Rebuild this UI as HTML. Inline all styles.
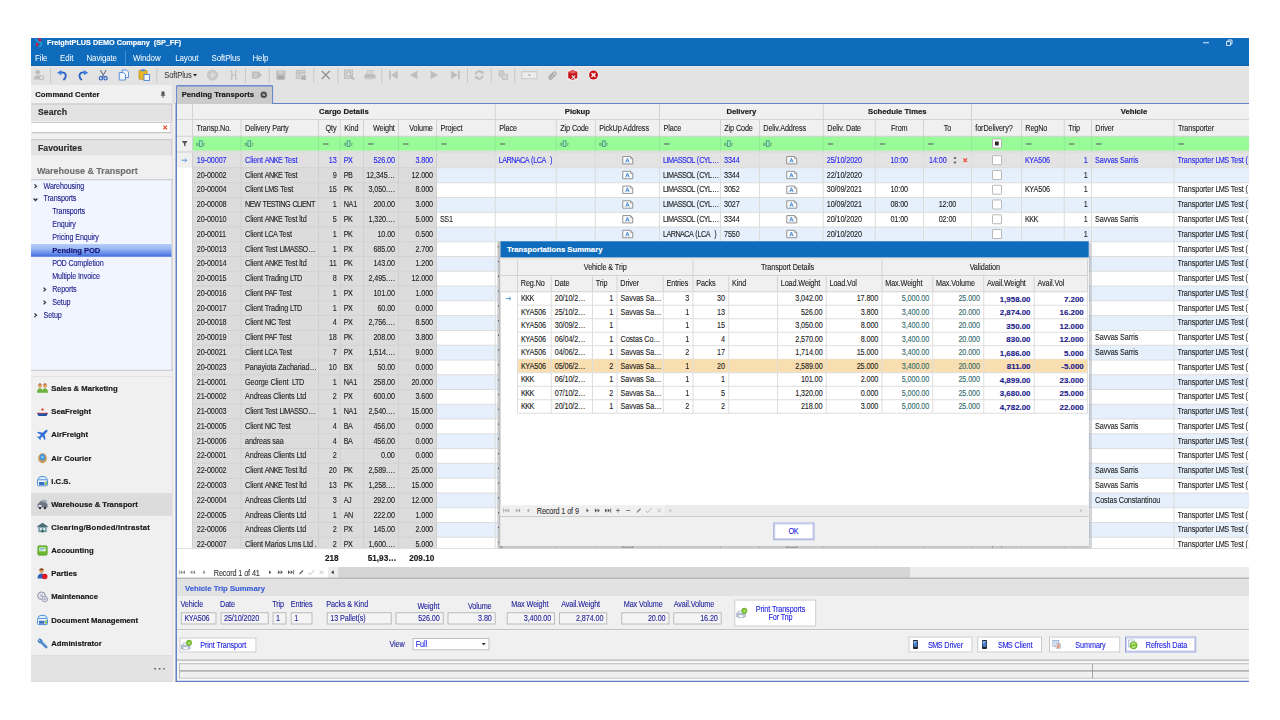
<!DOCTYPE html>
<html><head><meta charset="utf-8"><title>FreightPLUS DEMO Company (SP_FF)</title>
<style>html,body{margin:0;padding:0}
html{overflow:hidden;background:#fff}
body{width:1280px;height:720px;position:relative;overflow:hidden;background:#fff;font-family:"Liberation Sans",sans-serif;}
#root{left:0;top:0;width:5120px;height:2880px;transform:scale(0.25);transform-origin:0 0}

div,svg{position:absolute;box-sizing:border-box}
svg{overflow:visible}
.t,.tsel,.tn,.tl,.tr,.tt,.m,.b,.h,.h2,.bf,.bb,.bn,.tb{white-space:nowrap}
.t,.tsel,.tn,.tl,.tr,.tt{-webkit-text-stroke:0.4px currentColor}
.t{font-size:33px;color:#1c1c1c;letter-spacing:-0.52px}
.tsel{font-size:33px;color:#2424f0;letter-spacing:-0.52px}
.tn{font-size:33px;color:#1d1d9a;letter-spacing:-0.52px}
.tl{font-size:33px;color:#2222e0;letter-spacing:-0.52px}
.tr{font-size:32.6px;color:#1a1a8a;letter-spacing:-0.52px}
.tt{font-size:33px;color:#2f6a6a;letter-spacing:-0.52px}
.tb{font-size:30.4px;font-weight:bold;color:#12127a;letter-spacing:-0.2px;-webkit-text-stroke:0.48px #12127a}
.m{font-size:36px;letter-spacing:-0.48px}
.b{font-size:30.8px;font-weight:bold;color:#1a1a1a;-webkit-text-stroke:0.72px #1a1a1a}
.b.w,.ti.w{-webkit-text-stroke:0.6px #fff}
.ti{font-size:29px;font-weight:bold;white-space:nowrap}
i{font-style:normal;letter-spacing:-2.6px}
.bf{font-size:32.8px;font-weight:bold;color:#1a1a1a;-webkit-text-stroke:0.6px #1a1a1a}
.bn{font-size:31.6px;font-weight:bold;color:#1a1a8c;-webkit-text-stroke:0.48px #1a1a8c}
.bb{font-size:30.8px;font-weight:bold;color:#3a5fd8;-webkit-text-stroke:0.6px #3a5fd8}
.h{font-size:34.8px;font-weight:bold;color:#2a2a2a;-webkit-text-stroke:0.6px #2a2a2a}
.h2{font-size:35.8px;font-weight:bold;color:#6e6e6e;-webkit-text-stroke:0.6px #6e6e6e}
.w{color:#fff}
</style></head>
<body>
<div id="root">
<div style="left:124px;top:152px;width:4872px;height:2574px;background:#f0f0f0;"></div>
<div style="left:124px;top:152px;width:4872px;height:112px;background:#0f6cbd;"></div>
<svg style="left:137.2px;top:150.8px" width="36" height="40" viewBox="0 0 9 10"><path d="M1 1.200 3.800 4.600" stroke="#2aa3dc" stroke-width="1.200" fill="none"/><path d="M4 4.600c1.500-.6 3.200.2 3.200 1.600S6 8.600 4.800 8.800" stroke="#2aa3dc" stroke-width="1.200" fill="none"/><circle cx="5.700" cy="2.200" r="1.500" fill="#d0213a"/><circle cx="4.400" cy="1.200" r=".8" fill="#d0213a"/><path d="M2.200 5.200c1.200-.4 2.300.4 2 1.400s-1 1.300-.5 2.200c-1.300.2-2.300-.6-2-1.700z" fill="#d0213a"/></svg>
<div class="ti w" style="top:151.2px;height:40px;line-height:40px;left:188px;">FreightPLUS DEMO Company&nbsp; (SP_FF)</div>
<div style="left:4812px;top:169.2px;width:24px;height:3.6px;background:#e6eefa;"></div>
<svg style="left:4900px;top:154px" width="32" height="32" viewBox="0 0 8 8"><path d="M1.5 3h4v4h-4z M3 3V1.5h4v4H5.5" fill="none" stroke="#e6eefa" stroke-width="0.9"/></svg>
<div class="m w" style="top:210.8px;height:40px;line-height:40px;left:140px;transform:scaleX(0.88);transform-origin:0 50%;">File</div>
<div class="m w" style="top:210.8px;height:40px;line-height:40px;left:240px;transform:scaleX(0.88);transform-origin:0 50%;">Edit</div>
<div class="m w" style="top:210.8px;height:40px;line-height:40px;left:346px;transform:scaleX(0.88);transform-origin:0 50%;">Navigate</div>
<div class="m w" style="top:210.8px;height:40px;line-height:40px;left:532px;transform:scaleX(0.88);transform-origin:0 50%;">Window</div>
<div class="m w" style="top:210.8px;height:40px;line-height:40px;left:701.2px;transform:scaleX(0.88);transform-origin:0 50%;">Layout</div>
<div class="m w" style="top:210.8px;height:40px;line-height:40px;left:846.4px;transform:scaleX(0.88);transform-origin:0 50%;">SoftPlus</div>
<div class="m w" style="top:210.8px;height:40px;line-height:40px;left:1010px;transform:scaleX(0.88);transform-origin:0 50%;">Help</div>
<div style="left:500px;top:204px;width:3.2px;height:56px;background:#5b9ad6;"></div>
<div style="left:124px;top:264px;width:4872px;height:76px;background:#e3e3e3;"></div>
<div style="left:124px;top:260.8px;width:4872px;height:3.2px;background:#0b5fae;"></div>
<div style="left:124px;top:264px;width:4872px;height:2.8px;background:#f1ebe6;"></div>
<div style="left:690px;top:340px;width:4306px;height:76px;background:#e3e3e3;"></div>
<div style="left:200.4px;top:271.2px;width:3.6px;height:60px;background:#c8c8c8;"></div>
<div style="left:625.4px;top:271.2px;width:3.6px;height:60px;background:#c8c8c8;"></div>
<div style="left:980.4px;top:271.2px;width:3.6px;height:60px;background:#c8c8c8;"></div>
<div style="left:1075.4px;top:271.2px;width:3.6px;height:60px;background:#c8c8c8;"></div>
<div style="left:1253.4px;top:271.2px;width:3.6px;height:60px;background:#c8c8c8;"></div>
<div style="left:1350.4px;top:271.2px;width:3.6px;height:60px;background:#c8c8c8;"></div>
<div style="left:1525.4px;top:271.2px;width:3.6px;height:60px;background:#c8c8c8;"></div>
<div style="left:1868.4px;top:271.2px;width:3.6px;height:60px;background:#c8c8c8;"></div>
<div style="left:1963.4px;top:271.2px;width:3.6px;height:60px;background:#c8c8c8;"></div>
<div style="left:2057.2px;top:271.2px;width:3.6px;height:60px;background:#c8c8c8;"></div>
<svg style="left:131px;top:276.4px" width="48" height="48" viewBox="0 0 12 12"><circle cx="5" cy="3.3" r="2.3" fill="#bdbdbd"/><path d="M1 10.5c0-3 2-4.2 4-4.2s3 .8 3.5 1.5v2.7z" fill="#bdbdbd"/><circle cx="8.8" cy="8.6" r="2.1" fill="#e3e3e3" stroke="#bdbdbd" stroke-width="1.1"/></svg>
<svg style="left:224px;top:276.4px" width="48" height="48" viewBox="0 0 12 12"><path d="M4.600 3.500c3.200-.7 5.400 1 5.200 3.500-.1 1.600-1 2.900-2.400 3.900" fill="none" stroke="#2a62c4" stroke-width="1.900"/><path d="M1 3.800 5.400.9v5.400z" fill="#3f7fe0"/></svg>
<svg style="left:309px;top:276.4px" width="48" height="48" viewBox="0 0 12 12"><path d="M7.400 3.500C4.200 2.800 2 4.500 2.200 7c.1 1.600 1 2.900 2.400 3.900" fill="none" stroke="#2a62c4" stroke-width="1.900"/><path d="M11 3.800 6.600.9v5.400z" fill="#3f7fe0"/></svg>
<svg style="left:389px;top:276.4px" width="48" height="48" viewBox="0 0 12 12"><path d="M3 1l4.200 7M9 1 4.800 8" stroke="#6b7686" stroke-width="1.1" fill="none"/><circle cx="3.7" cy="9.300" r="1.700" fill="none" stroke="#2d62c8" stroke-width="1.100"/><circle cx="8.300" cy="9.300" r="1.700" fill="none" stroke="#2d62c8" stroke-width="1.100"/></svg>
<svg style="left:471px;top:276.4px" width="48" height="48" viewBox="0 0 12 12"><path d="M4.500 1h4.200l2 2v5.500H4.500z" fill="#f4f8ff" stroke="#4d86d6" stroke-width=".9"/><path d="M1.500 3.500h4.200l2 2V11H1.500z" fill="#f4f8ff" stroke="#4d86d6" stroke-width=".9"/></svg>
<svg style="left:552px;top:274.4px" width="52" height="52" viewBox="0 0 13 13"><rect x="1" y="1.800" width="8" height="9" rx=".8" fill="#e8b429" stroke="#b98612" stroke-width=".7"/><rect x="3" y=".8" width="4" height="2" rx=".6" fill="#5b8fd9"/><rect x="6" y="6" width="5.500" height="6" fill="#f4f8ff" stroke="#4d86d6" stroke-width=".9"/></svg>
<div class="m" style="top:281.2px;height:40px;line-height:40px;left:656.8px;color:#2a2a2a;font-size:34.4px;transform:scaleX(0.88);transform-origin:0 50%;">SoftPlus</div>
<svg style="left:772px;top:295.6px" width="16" height="12" viewBox="0 0 4 3"><path d="M0 0h4L2 2.600z" fill="#222"/></svg>
<svg style="left:826px;top:276.4px" width="48" height="48" viewBox="0 0 12 12"><circle cx="6" cy="6" r="5" fill="#c9c9c9" stroke="#bdbdbd" stroke-width=".8"/><circle cx="6" cy="6" r="2" fill="#e3e3e3"/><path d="M6 2.500v7M2.500 6h7" stroke="#dadada" stroke-width=".9"/></svg>
<svg style="left:915px;top:278.4px" width="40" height="44" viewBox="0 0 10 11"><path d="M1.500 1.500h1.600v8H1.500M8.500 1.500H6.900v8h1.600" fill="none" stroke="#bdbdbd" stroke-width="1.100"/><path d="M3.100 5.500h3.800" stroke="#bdbdbd" stroke-width="1"/></svg>
<svg style="left:1004px;top:280.4px" width="48" height="40" viewBox="0 0 12 10"><path d="M1 1.500h6.500L11 5 7.500 8.500H1z" fill="#bdbdbd"/><path d="M2.500 3.500h4M2.500 5h4M2.500 6.500h4" stroke="#e3e3e3" stroke-width=".6"/></svg>
<svg style="left:1101px;top:278.4px" width="44" height="44" viewBox="0 0 11 11"><rect x="1" y="1" width="9" height="9" rx=".6" fill="#bdbdbd"/><rect x="3" y="1" width="5" height="3.500" fill="#cfcfcf"/><rect x="2.500" y="6.300" width="6" height="3.700" fill="#a9a9a9"/></svg>
<svg style="left:1181px;top:278.4px" width="48" height="44" viewBox="0 0 12 11"><rect x="1" y="1" width="8.500" height="8" fill="#d2d2d2" stroke="#bdbdbd" stroke-width=".9"/><path d="M1 3.200h8.500M3.800 1v8" stroke="#bdbdbd" stroke-width=".8"/><path d="M6.500 6.500l4 4M10.500 6.500l-4 4" stroke="#a8a8a8" stroke-width="1.300"/></svg>
<svg style="left:1281px;top:278.4px" width="44" height="44" viewBox="0 0 11 11"><path d="M1.500 1.500l8 8M9.500 1.500l-8 8" stroke="#8d8d8d" stroke-width="1.100"/></svg>
<svg style="left:1374px;top:276.4px" width="48" height="48" viewBox="0 0 12 12"><rect x="1" y="1" width="8" height="8.500" fill="#d4d4d4" stroke="#bdbdbd" stroke-width=".9"/><circle cx="5" cy="5" r="2.300" fill="#dedede" stroke="#b3b3b3" stroke-width=".9"/><path d="M7 7l3.500 3.500" stroke="#b0b0b0" stroke-width="1.400"/></svg>
<svg style="left:1454px;top:278.4px" width="52" height="44" viewBox="0 0 13 11"><path d="M4 1h6l-1.500 4h-6z" fill="#d6d6d6" stroke="#bdbdbd" stroke-width=".6"/><path d="M1 6l1.500-1.500h8L12 6v3H1z" fill="#bdbdbd"/><rect x="2.500" y="8" width="7" height="2" fill="#cdcdcd"/></svg>
<svg style="left:1553px;top:280.4px" width="40" height="40" viewBox="0 0 10 10"><rect x=".8" y=".8" width="1.700" height="8.400" fill="#bdbdbd"/><path d="M9.400.8v8.400L2.800 5z" fill="#bdbdbd"/></svg>
<svg style="left:1636px;top:280.4px" width="36" height="40" viewBox="0 0 9 10"><path d="M8.300.8v8.400L1 5z" fill="#bdbdbd"/></svg>
<svg style="left:1720.4px;top:280.4px" width="36" height="40" viewBox="0 0 9 10"><path d="M.7.800v8.400L8 5z" fill="#bdbdbd"/></svg>
<svg style="left:1802px;top:280.4px" width="40" height="40" viewBox="0 0 10 10"><rect x="7.500" y=".8" width="1.700" height="8.400" fill="#bdbdbd"/><path d="M.6.800v8.400L7.200 5z" fill="#bdbdbd"/></svg>
<svg style="left:1895px;top:278.4px" width="44" height="44" viewBox="0 0 11 11"><path d="M2 5a3.600 3.600 0 0 1 6.500-1.800M9 6A3.600 3.600 0 0 1 2.500 7.800" fill="none" stroke="#bdbdbd" stroke-width="1.900"/><path d="M9.800 1v3.300H6.500zM1.200 10V6.700h3.300z" fill="#bdbdbd"/></svg>
<svg style="left:1990px;top:278.4px" width="44" height="44" viewBox="0 0 11 11"><rect x="1.500" y="1" width="5" height="6.500" rx="1.500" fill="#cdcdcd" stroke="#bdbdbd" stroke-width=".8"/><rect x="5" y="5" width="5" height="5" fill="#d6d6d6" stroke="#bdbdbd" stroke-width=".8"/></svg>
<div style="left:2085.2px;top:285.2px;width:65.2px;height:32px;background:#ededed;border:4px solid #c4c4c4;"></div>
<svg style="left:2112px;top:298px" width="12" height="8" viewBox="0 0 3 2"><path d="M0 0h3L1.500 1.800z" fill="#999"/></svg>
<svg style="left:2186px;top:280.4px" width="44" height="40" viewBox="0 0 11 10"><path d="M2 7.500 7 2.300a1.600 1.600 0 0 1 2.300 2.200L4.500 9.200a1 1 0 0 1-1.400-1.400L7.300 3.700" fill="none" stroke="#a9a9a9" stroke-width="1.300"/></svg>
<svg style="left:2267.2px;top:276.4px" width="48" height="48" viewBox="0 0 12 12"><rect x=".5" y=".5" width="11" height="11" rx="1.500" fill="#f6eaea"/><path d="M1.500 3 6 1l4.500 2v6L6 11 1.500 9z" fill="#c4121c"/><path d="M1.500 3 6 1l4.500 2L6 5z" fill="#e25a60"/><path d="M5 6.500l3.500 3.500M8.500 6.500 5 10" stroke="#d8d8d8" stroke-width="1.100"/></svg>
<svg style="left:2349.6px;top:276.4px" width="48" height="48" viewBox="0 0 12 12"><circle cx="6" cy="6" r="5.300" fill="#fff"/><circle cx="6" cy="6" r="4.500" fill="#c8101a"/><path d="M4 4l4 4M8 4 4 8" stroke="#fff" stroke-width="1.400"/></svg>
<div style="left:124px;top:340px;width:566px;height:2386px;background:#f0f0f0;"></div>
<div style="left:687.6px;top:340px;width:2.4px;height:2386px;background:#d6d6d6;"></div>
<div style="left:693.2px;top:416px;width:8.4px;height:2310px;background:#f3efe9;"></div>
<div class="b" style="top:358.4px;height:40px;line-height:40px;left:141.2px;">Command Center</div>
<svg style="left:640px;top:362.4px" width="24" height="32" viewBox="0 0 6 8"><path d="M1.500 1h3v3.200l1 1H.5l1-1z" fill="#555"/><path d="M3 5.200v2.300" stroke="#555" stroke-width=".8"/></svg>
<div style="left:124px;top:413.6px;width:563.6px;height:71.6px;background:#e3e3e3;border-top:4px solid #c4c4c4;border-right:4px solid #cfcfcf;"></div>
<div class="h" style="top:428.8px;height:40px;line-height:40px;left:152px;">Search</div>
<div style="left:126px;top:488px;width:559.2px;height:45.2px;background:#fff;border:4px solid #cdcdcd;border-bottom-color:#b4b4b4;border-left:none;"></div>
<svg style="left:651px;top:500.4px" width="20" height="20" viewBox="0 0 5 5"><path d="M.7.700l3.600 3.600M4.300.700.7 4.300" stroke="#e8401c" stroke-width="1.100"/></svg>
<div style="left:124px;top:557.2px;width:563.6px;height:65.2px;background:#e3e3e3;border-top:4px solid #c4c4c4;border-right:4px solid #cfcfcf;"></div>
<div class="h" style="top:572px;height:40px;line-height:40px;left:152px;">Favourites</div>
<div class="h2" style="top:663.6px;height:40px;line-height:40px;left:148px;">Warehouse &amp; Transport</div>
<div style="left:124px;top:717.2px;width:566.4px;height:766px;background:#f0f5ff;border:4px solid #c2c4c8;border-left:none;"></div>
<div class="tr" style="top:722.8px;height:40px;line-height:40px;left:173.6px;transform:scaleX(0.88);transform-origin:0 50%;">Warehousing</div>
<svg style="left:134px;top:735.2px" width="16" height="20" viewBox="0 0 4 5"><path d="M1 .6l2 1.900-2 1.900" fill="none" stroke="#3a3a3a" stroke-width="1.300"/></svg>
<div class="tr" style="top:774.4px;height:40px;line-height:40px;left:173.6px;transform:scaleX(0.88);transform-origin:0 50%;">Transports</div>
<svg style="left:132px;top:789.6px" width="20" height="16" viewBox="0 0 5 4"><path d="M.6 1l1.900 2 1.900-2" fill="none" stroke="#3a3a3a" stroke-width="1.300"/></svg>
<div class="tr" style="top:826px;height:40px;line-height:40px;left:209.2px;transform:scaleX(0.88);transform-origin:0 50%;">Transports</div>
<div class="tr" style="top:877.6px;height:40px;line-height:40px;left:209.2px;transform:scaleX(0.88);transform-origin:0 50%;">Enquiry</div>
<div class="tr" style="top:929.2px;height:40px;line-height:40px;left:209.2px;transform:scaleX(0.88);transform-origin:0 50%;">Pricing Enquiry</div>
<div style="left:124px;top:976px;width:562px;height:51.2px;background:linear-gradient(#b4ccf7,#9dbcf4 35%,#3f6bdc);"></div>
<div class="tb" style="top:980.8px;height:40px;line-height:40px;left:209.2px;">Pending POD</div>
<div class="tr" style="top:1032.4px;height:40px;line-height:40px;left:209.2px;transform:scaleX(0.88);transform-origin:0 50%;"><i>PO</i>D Completion</div>
<div class="tr" style="top:1084px;height:40px;line-height:40px;left:209.2px;transform:scaleX(0.88);transform-origin:0 50%;">Multiple Invoice</div>
<div class="tr" style="top:1135.6px;height:40px;line-height:40px;left:209.2px;transform:scaleX(0.88);transform-origin:0 50%;">Reports</div>
<svg style="left:170.4px;top:1148px" width="16" height="20" viewBox="0 0 4 5"><path d="M1 .6l2 1.900-2 1.900" fill="none" stroke="#3a3a3a" stroke-width="1.300"/></svg>
<div class="tr" style="top:1187.2px;height:40px;line-height:40px;left:209.2px;transform:scaleX(0.88);transform-origin:0 50%;">Setup</div>
<svg style="left:170.4px;top:1199.6px" width="16" height="20" viewBox="0 0 4 5"><path d="M1 .6l2 1.900-2 1.900" fill="none" stroke="#3a3a3a" stroke-width="1.300"/></svg>
<div class="tr" style="top:1238.8px;height:40px;line-height:40px;left:173.6px;transform:scaleX(0.88);transform-origin:0 50%;">Setup</div>
<svg style="left:134px;top:1251.2px" width="16" height="20" viewBox="0 0 4 5"><path d="M1 .6l2 1.900-2 1.900" fill="none" stroke="#3a3a3a" stroke-width="1.300"/></svg>
<div style="left:124px;top:1504.4px;width:563.6px;height:3.6px;background:#e3e3e3;"></div>
<svg style="left:146.4px;top:1531.4px" width="48" height="44" viewBox="0 0 12 11"><circle cx="3.500" cy="3" r="2" fill="#e0a060"/><circle cx="8.500" cy="3" r="2" fill="#e0a060"/><path d="M.5 10c0-3 1.500-4.500 3-4.500s3 1.500 3 4.500z" fill="#6bb33a"/><path d="M5.500 10c0-3 1.500-4.500 3-4.500s3 1.500 3 4.500z" fill="#6bb33a"/><path d="M2.200 1.800a1.600 1.600 0 0 1 2.600 0M7.200 1.800a1.600 1.600 0 0 1 2.600 0" stroke="#a0522d" stroke-width="1" fill="none"/></svg>
<div class="b" style="top:1533.8px;height:40px;line-height:40px;left:205.2px;">Sales &amp; Marketing</div>
<svg style="left:146.4px;top:1624px" width="48" height="44" viewBox="0 0 12 11"><path d="M.5 7h11l-1.500 3h-8z" fill="#1d4fa8"/><path d="M2.500 7l1-2.500h5l1 2.500z" fill="#f6f6f6" stroke="#c8c8c8" stroke-width=".4"/><path d="M5 4.500V2.500h2v2z" fill="#d23b2b"/><path d="M.5 7.200h11" stroke="#d23b2b" stroke-width=".7"/></svg>
<div class="b" style="top:1626.4px;height:40px;line-height:40px;left:205.2px;">SeaFreight</div>
<svg style="left:146.4px;top:1714.6px" width="48" height="48" viewBox="0 0 12 12"><path d="M10.800 1.200c.7.700-.3 2-1.300 3L8 5.700l1 4.800-1 .8-2-3.800-2 2 .2 1.500-.7.500-1-2-2-1 .5-.700 1.500.2 2-2L.7 4l.8-1 4.800 1 1.500-1.500c1-1 2.300-2 3-1.300z" fill="#2d6fd8"/></svg>
<div class="b" style="top:1719px;height:40px;line-height:40px;left:205.2px;">AirFreight</div>
<svg style="left:148.4px;top:1807.2px" width="44" height="48" viewBox="0 0 11 12"><ellipse cx="5.500" cy="6.500" rx="4.300" ry="5" fill="#c79a5a"/><ellipse cx="5.500" cy="5.500" rx="2.600" ry="3.300" fill="#3f8fe0"/><path d="M4 4.500c.8-1 2-1 2.700 0s0 2-.7 2.500-1.600-.2-2-1z" fill="#7cc1f2"/></svg>
<div class="b" style="top:1811.6px;height:40px;line-height:40px;left:205.2px;">Air Courier</div>
<svg style="left:146.4px;top:1899.8px" width="48" height="48" viewBox="0 0 12 12"><path d="M1.500 5a4.500 3.500 0 0 1 9 0" fill="#dff0ff" stroke="#3d86d8" stroke-width="1"/><rect x="1" y="4.800" width="10" height="6" rx="1" fill="#f4f9ff" stroke="#3d86d8" stroke-width=".9"/><rect x="2.500" y="7" width="5.500" height="3" fill="#3d6fc0"/><rect x="8.800" y="6.500" width="1.500" height="3.500" fill="#6fb53c"/></svg>
<div class="b" style="top:1904.2px;height:40px;line-height:40px;left:205.2px;">I.C.S.</div>
<div style="left:124px;top:1972px;width:563.6px;height:91.2px;background:#dcdcdc;"></div>
<svg style="left:146.4px;top:1994.4px" width="48" height="44" viewBox="0 0 12 11"><path d="M1 6l3-3.500 4 .5 3 2.500v3.500H1z" fill="#6d7782"/><path d="M4 2.500l4-1.500 3 2-3 1z" fill="#9aa7b4"/><rect x="2" y="6.500" width="3" height="2" fill="#dfe6ee"/><circle cx="3.500" cy="9.500" r="1.200" fill="#333"/><circle cx="8.500" cy="9.500" r="1.200" fill="#333"/></svg>
<div class="b" style="top:1996.8px;height:40px;line-height:40px;left:205.2px;">Warehouse &amp; Transport</div>
<svg style="left:146.4px;top:2085px" width="48" height="48" viewBox="0 0 12 12"><path d="M.8 5 6 1.500 11.200 5v1H.8z" fill="#4b6f78"/><rect x="1.800" y="6" width="8.400" height="5" fill="#6f9aa2"/><rect x="3.300" y="6.800" width="2" height="2.200" fill="#dfeef0"/><rect x="6.700" y="6.800" width="2" height="2.200" fill="#dfeef0"/><rect x="5" y="9" width="2" height="2" fill="#2f4a50"/></svg>
<div class="b" style="top:2089.4px;height:40px;line-height:40px;left:205.2px;letter-spacing:0.72px;">Clearing/Bonded/Intrastat</div>
<svg style="left:148.4px;top:2179.6px" width="44" height="44" viewBox="0 0 11 11"><rect x=".8" y=".8" width="9.400" height="9.400" rx="1.200" fill="#6ab82f" stroke="#4d9420" stroke-width=".6"/><rect x="2.300" y="2.300" width="6.400" height="4" fill="#e9f7dc"/><path d="M3 3.500h5M3 5h3.500" stroke="#5a9ad8" stroke-width=".7"/></svg>
<div class="b" style="top:2182px;height:40px;line-height:40px;left:205.2px;">Accounting</div>
<svg style="left:146.4px;top:2270.2px" width="48" height="48" viewBox="0 0 12 12"><circle cx="5" cy="3.300" r="2.300" fill="#e2a468"/><path d="M2.600 2.600a2.500 2.500 0 0 1 4.800-.3L5 3z" fill="#8b4a22"/><path d="M1 11c0-3.500 1.800-5 4-5s4 1.500 4 5z" fill="#2f5fb8"/><circle cx="8.300" cy="9" r="2.700" fill="#e01b24"/></svg>
<div class="b" style="top:2274.6px;height:40px;line-height:40px;left:205.2px;">Parties</div>
<svg style="left:146.4px;top:2362.8px" width="48" height="48" viewBox="0 0 12 12"><circle cx="5" cy="5" r="3.800" fill="#e6e6ee" stroke="#8d90a8" stroke-width="1"/><circle cx="5" cy="5" r="1.400" fill="#b8bbd0"/><circle cx="8.300" cy="8.300" r="2.800" fill="#dcdce6" stroke="#9a9cb4" stroke-width=".9"/><circle cx="8.300" cy="8.300" r="1" fill="#a4a6bc"/></svg>
<div class="b" style="top:2367.2px;height:40px;line-height:40px;left:205.2px;">Maintenance</div>
<svg style="left:146.4px;top:2455.4px" width="48" height="48" viewBox="0 0 12 12"><path d="M1.500 5a4.500 3.500 0 0 1 9 0" fill="#dff0ff" stroke="#3d86d8" stroke-width="1"/><rect x="1" y="4.800" width="10" height="6" rx="1" fill="#f4f9ff" stroke="#3d86d8" stroke-width=".9"/><rect x="2.500" y="7" width="5.500" height="3" fill="#3d6fc0"/><rect x="8.800" y="6.500" width="1.500" height="3.500" fill="#6fb53c"/></svg>
<div class="b" style="top:2459.8px;height:40px;line-height:40px;left:205.2px;">Document Management</div>
<svg style="left:146.4px;top:2548px" width="48" height="48" viewBox="0 0 12 12"><path d="M2 2.200a2.600 2.600 0 0 1 3.800 2.500l4.600 4.600a1 1 0 0 1-1.500 1.500L4.300 6.200A2.600 2.600 0 0 1 1.500 3l1.600 1.300 1-1z" fill="#4f8fdc" stroke="#2f62a8" stroke-width=".5"/></svg>
<div class="b" style="top:2552.4px;height:40px;line-height:40px;left:205.2px;">Administrator</div>
<div style="left:124px;top:2620.8px;width:563.6px;height:105.2px;background:#e3e3e3;border-top:4px solid #dadada;"></div>
<div style="left:617.4px;top:2671.6px;width:6.8px;height:6.8px;background:#555;border-radius:2px;"></div>
<div style="left:635px;top:2671.6px;width:6.8px;height:6.8px;background:#555;border-radius:2px;"></div>
<div style="left:652.6px;top:2671.6px;width:6.8px;height:6.8px;background:#555;border-radius:2px;"></div>
<div style="left:124px;top:2723.6px;width:566px;height:2.4px;background:#cfcfcf;"></div>
<div style="left:702px;top:340px;width:392px;height:76px;background:#cbcbcb;border:6px solid #6c8ace;border-bottom:none;border-radius:8px 8px 0 0;"></div>
<div class="b" style="top:358.4px;height:40px;line-height:40px;left:726.8px;">Pending Transports</div>
<svg style="left:1041.2px;top:364.8px" width="28" height="28" viewBox="0 0 7 7"><circle cx="3.500" cy="3.500" r="3.200" fill="#4a4a4a"/><path d="M2.300 2.300l2.400 2.400M4.700 2.300 2.300 4.700" stroke="#e8e8e8" stroke-width=".8"/></svg>
<div style="left:1092px;top:412px;width:3904px;height:4px;background:#6482ca;"></div>
<div style="left:701.6px;top:412px;width:6.8px;height:2315.6px;background:#6482ca;"></div>
<div style="left:708px;top:416px;width:3.6px;height:2306px;background:#fbf8f0;"></div>
<div style="left:704px;top:2722px;width:4292px;height:5.6px;background:#6482ca;"></div>
<div style="left:708px;top:416px;width:4288px;height:128.8px;background:#f0f0f0;"></div>
<div style="left:708px;top:544.8px;width:62px;height:58.4px;background:#f0f0f0;"></div>
<div style="left:770px;top:544.8px;width:4226px;height:58.4px;background:#98fb98;"></div>
<div style="left:708px;top:603.2px;width:4288px;height:9.2px;background:#dedede;"></div>
<div class="b" style="top:427.2px;height:40px;line-height:40px;left:775.6px;width:1200px;text-align:center;">Cargo Details</div>
<div style="left:768px;top:416px;width:4px;height:62.4px;background:#d3d3d3;"></div>
<div class="b" style="top:427.2px;height:40px;line-height:40px;left:1709.6px;width:1200px;text-align:center;">Pickup</div>
<div style="left:1979.2px;top:416px;width:4px;height:62.4px;background:#d3d3d3;"></div>
<div class="b" style="top:427.2px;height:40px;line-height:40px;left:2365.5px;width:1200px;text-align:center;">Delivery</div>
<div style="left:2636px;top:416px;width:4px;height:62.4px;background:#d3d3d3;"></div>
<div class="b" style="top:427.2px;height:40px;line-height:40px;left:2989.3px;width:1200px;text-align:center;">Schedule Times</div>
<div style="left:3291px;top:416px;width:4px;height:62.4px;background:#d3d3d3;"></div>
<div class="b" style="top:427.2px;height:40px;line-height:40px;left:3936px;width:1200px;text-align:center;">Vehicle</div>
<div style="left:3883.6px;top:416px;width:4px;height:62.4px;background:#d3d3d3;"></div>
<div style="left:708px;top:476.4px;width:4288px;height:4px;background:#d3d3d3;"></div>
<div style="left:708px;top:542.8px;width:4288px;height:4px;background:#d3d3d3;"></div>
<div style="left:768px;top:478.4px;width:4px;height:66.4px;background:#d3d3d3;"></div>
<div style="left:768px;top:544.8px;width:4px;height:58.4px;background:#d3d3d3;"></div>
<div class="t" style="top:491.2px;height:40px;line-height:40px;left:785.6px;transform:scaleX(0.88);transform-origin:0 50%;">Transp.No.</div>
<svg style="left:784.4px;top:561.2px" width="40" height="28" viewBox="0 0 10 7"><rect x="3.400" y=".6" width="2.800" height="5.600" fill="#a4f0b4" stroke="#3f9a84" stroke-width=".9"/><path d="M.5 3h1.500v2.200H.5zM2 3v2.200" stroke="#5f8f6f" stroke-width=".6" fill="none"/><path d="M9 3.200H7.600v1.900H9" stroke="#5f8f6f" stroke-width=".6" fill="none"/></svg>
<div style="left:962px;top:478.4px;width:4px;height:66.4px;background:#d3d3d3;"></div>
<div style="left:962px;top:544.8px;width:4px;height:58.4px;background:#8eea96;"></div>
<div class="t" style="top:491.2px;height:40px;line-height:40px;left:979.6px;transform:scaleX(0.88);transform-origin:0 50%;">Delivery Party</div>
<svg style="left:978.4px;top:561.2px" width="40" height="28" viewBox="0 0 10 7"><rect x="3.400" y=".6" width="2.800" height="5.600" fill="#a4f0b4" stroke="#3f9a84" stroke-width=".9"/><path d="M.5 3h1.500v2.200H.5zM2 3v2.200" stroke="#5f8f6f" stroke-width=".6" fill="none"/><path d="M9 3.200H7.600v1.900H9" stroke="#5f8f6f" stroke-width=".6" fill="none"/></svg>
<div style="left:1272px;top:478.4px;width:4px;height:66.4px;background:#d3d3d3;"></div>
<div style="left:1272px;top:544.8px;width:4px;height:58.4px;background:#8eea96;"></div>
<div class="t" style="top:491.2px;height:40px;line-height:40px;right:3774.2px;transform:scaleX(0.88);transform-origin:100% 50%;">Qty</div>
<div style="left:1292.4px;top:572.8px;width:21.6px;height:6px;background:#6f8f72;"></div>
<div style="left:1359px;top:478.4px;width:4px;height:66.4px;background:#d3d3d3;"></div>
<div style="left:1359px;top:544.8px;width:4px;height:58.4px;background:#8eea96;"></div>
<div class="t" style="top:491.2px;height:40px;line-height:40px;left:1376.6px;transform:scaleX(0.88);transform-origin:0 50%;">Kind</div>
<svg style="left:1375.4px;top:561.2px" width="40" height="28" viewBox="0 0 10 7"><rect x="3.400" y=".6" width="2.800" height="5.600" fill="#a4f0b4" stroke="#3f9a84" stroke-width=".9"/><path d="M.5 3h1.500v2.200H.5zM2 3v2.200" stroke="#5f8f6f" stroke-width=".6" fill="none"/><path d="M9 3.200H7.600v1.900H9" stroke="#5f8f6f" stroke-width=".6" fill="none"/></svg>
<div style="left:1452px;top:478.4px;width:4px;height:66.4px;background:#d3d3d3;"></div>
<div style="left:1452px;top:544.8px;width:4px;height:58.4px;background:#8eea96;"></div>
<div class="t" style="top:491.2px;height:40px;line-height:40px;right:3541.2px;transform:scaleX(0.88);transform-origin:100% 50%;">Weight</div>
<div style="left:1472.4px;top:572.8px;width:21.6px;height:6px;background:#6f8f72;"></div>
<div style="left:1592px;top:478.4px;width:4px;height:66.4px;background:#d3d3d3;"></div>
<div style="left:1592px;top:544.8px;width:4px;height:58.4px;background:#8eea96;"></div>
<div class="t" style="top:491.2px;height:40px;line-height:40px;right:3388.8px;transform:scaleX(0.88);transform-origin:100% 50%;">Volume</div>
<div style="left:1612.4px;top:572.8px;width:21.6px;height:6px;background:#6f8f72;"></div>
<div style="left:1744.4px;top:478.4px;width:4px;height:66.4px;background:#d3d3d3;"></div>
<div style="left:1744.4px;top:544.8px;width:4px;height:58.4px;background:#8eea96;"></div>
<div class="t" style="top:491.2px;height:40px;line-height:40px;left:1762px;transform:scaleX(0.88);transform-origin:0 50%;">Project</div>
<div style="left:1764.8px;top:572.8px;width:21.6px;height:6px;background:#6f8f72;"></div>
<div style="left:1979.2px;top:478.4px;width:4px;height:66.4px;background:#d3d3d3;"></div>
<div style="left:1979.2px;top:544.8px;width:4px;height:58.4px;background:#8eea96;"></div>
<div class="t" style="top:491.2px;height:40px;line-height:40px;left:1996.8px;transform:scaleX(0.88);transform-origin:0 50%;">Place</div>
<div style="left:1999.6px;top:572.8px;width:21.6px;height:6px;background:#6f8f72;"></div>
<div style="left:2223px;top:478.4px;width:4px;height:66.4px;background:#d3d3d3;"></div>
<div style="left:2223px;top:544.8px;width:4px;height:58.4px;background:#8eea96;"></div>
<div class="t" style="top:491.2px;height:40px;line-height:40px;left:2240.6px;transform:scaleX(0.88);transform-origin:0 50%;">Zip Code</div>
<svg style="left:2239.4px;top:561.2px" width="40" height="28" viewBox="0 0 10 7"><rect x="3.400" y=".6" width="2.800" height="5.600" fill="#a4f0b4" stroke="#3f9a84" stroke-width=".9"/><path d="M.5 3h1.500v2.200H.5zM2 3v2.200" stroke="#5f8f6f" stroke-width=".6" fill="none"/><path d="M9 3.200H7.600v1.900H9" stroke="#5f8f6f" stroke-width=".6" fill="none"/></svg>
<div style="left:2379.2px;top:478.4px;width:4px;height:66.4px;background:#d3d3d3;"></div>
<div style="left:2379.2px;top:544.8px;width:4px;height:58.4px;background:#8eea96;"></div>
<div class="t" style="top:491.2px;height:40px;line-height:40px;left:2396.8px;transform:scaleX(0.88);transform-origin:0 50%;">PickUp Address</div>
<svg style="left:2395.6px;top:561.2px" width="40" height="28" viewBox="0 0 10 7"><rect x="3.400" y=".6" width="2.800" height="5.600" fill="#a4f0b4" stroke="#3f9a84" stroke-width=".9"/><path d="M.5 3h1.500v2.200H.5zM2 3v2.200" stroke="#5f8f6f" stroke-width=".6" fill="none"/><path d="M9 3.200H7.600v1.900H9" stroke="#5f8f6f" stroke-width=".6" fill="none"/></svg>
<div style="left:2636px;top:478.4px;width:4px;height:66.4px;background:#d3d3d3;"></div>
<div style="left:2636px;top:544.8px;width:4px;height:58.4px;background:#8eea96;"></div>
<div class="t" style="top:491.2px;height:40px;line-height:40px;left:2653.6px;transform:scaleX(0.88);transform-origin:0 50%;">Place</div>
<div style="left:2656.4px;top:572.8px;width:21.6px;height:6px;background:#6f8f72;"></div>
<div style="left:2879.6px;top:478.4px;width:4px;height:66.4px;background:#d3d3d3;"></div>
<div style="left:2879.6px;top:544.8px;width:4px;height:58.4px;background:#8eea96;"></div>
<div class="t" style="top:491.2px;height:40px;line-height:40px;left:2897.2px;transform:scaleX(0.88);transform-origin:0 50%;">Zip Code</div>
<svg style="left:2896px;top:561.2px" width="40" height="28" viewBox="0 0 10 7"><rect x="3.400" y=".6" width="2.800" height="5.600" fill="#a4f0b4" stroke="#3f9a84" stroke-width=".9"/><path d="M.5 3h1.500v2.200H.5zM2 3v2.200" stroke="#5f8f6f" stroke-width=".6" fill="none"/><path d="M9 3.200H7.600v1.900H9" stroke="#5f8f6f" stroke-width=".6" fill="none"/></svg>
<div style="left:3035.6px;top:478.4px;width:4px;height:66.4px;background:#d3d3d3;"></div>
<div style="left:3035.6px;top:544.8px;width:4px;height:58.4px;background:#8eea96;"></div>
<div class="t" style="top:491.2px;height:40px;line-height:40px;left:3053.2px;transform:scaleX(0.88);transform-origin:0 50%;">Deliv.Address</div>
<svg style="left:3052px;top:561.2px" width="40" height="28" viewBox="0 0 10 7"><rect x="3.400" y=".6" width="2.800" height="5.600" fill="#a4f0b4" stroke="#3f9a84" stroke-width=".9"/><path d="M.5 3h1.500v2.200H.5zM2 3v2.200" stroke="#5f8f6f" stroke-width=".6" fill="none"/><path d="M9 3.200H7.600v1.900H9" stroke="#5f8f6f" stroke-width=".6" fill="none"/></svg>
<div style="left:3291px;top:478.4px;width:4px;height:66.4px;background:#d3d3d3;"></div>
<div style="left:3291px;top:544.8px;width:4px;height:58.4px;background:#8eea96;"></div>
<div class="t" style="top:491.2px;height:40px;line-height:40px;left:3308.6px;transform:scaleX(0.88);transform-origin:0 50%;">Deliv. Date</div>
<div style="left:3311.4px;top:572.8px;width:21.6px;height:6px;background:#6f8f72;"></div>
<div style="left:3498.8px;top:478.4px;width:4px;height:66.4px;background:#d3d3d3;"></div>
<div style="left:3498.8px;top:544.8px;width:4px;height:58.4px;background:#8eea96;"></div>
<div class="t" style="top:491.2px;height:40px;line-height:40px;left:2997.2px;width:1200px;text-align:center;transform:scaleX(0.88);transform-origin:50% 50%;">From</div>
<div style="left:3519.2px;top:572.8px;width:21.6px;height:6px;background:#6f8f72;"></div>
<div style="left:3691.6px;top:478.4px;width:4px;height:66.4px;background:#d3d3d3;"></div>
<div style="left:3691.6px;top:544.8px;width:4px;height:58.4px;background:#8eea96;"></div>
<div class="t" style="top:491.2px;height:40px;line-height:40px;left:3189.6px;width:1200px;text-align:center;transform:scaleX(0.88);transform-origin:50% 50%;">To</div>
<div style="left:3712px;top:572.8px;width:21.6px;height:6px;background:#6f8f72;"></div>
<div style="left:3883.6px;top:478.4px;width:4px;height:66.4px;background:#d3d3d3;"></div>
<div style="left:3883.6px;top:544.8px;width:4px;height:58.4px;background:#8eea96;"></div>
<div class="t" style="top:491.2px;height:40px;line-height:40px;left:3901.2px;transform:scaleX(0.88);transform-origin:0 50%;">forDelivery?</div>
<div style="left:3967.6px;top:554px;width:40px;height:40px;background:#fff;border:4px solid #b4b4b4;border-radius:4px;"></div>
<div style="left:3980px;top:566.4px;width:15.2px;height:15.2px;background:#2a2a2a;"></div>
<div style="left:4083.6px;top:478.4px;width:4px;height:66.4px;background:#d3d3d3;"></div>
<div style="left:4083.6px;top:544.8px;width:4px;height:58.4px;background:#8eea96;"></div>
<div class="t" style="top:491.2px;height:40px;line-height:40px;left:4101.2px;transform:scaleX(0.88);transform-origin:0 50%;">RegNo</div>
<div style="left:4104px;top:572.8px;width:21.6px;height:6px;background:#6f8f72;"></div>
<div style="left:4255.2px;top:478.4px;width:4px;height:66.4px;background:#d3d3d3;"></div>
<div style="left:4255.2px;top:544.8px;width:4px;height:58.4px;background:#8eea96;"></div>
<div class="t" style="top:491.2px;height:40px;line-height:40px;left:4272.8px;transform:scaleX(0.88);transform-origin:0 50%;">Trip</div>
<div style="left:4275.6px;top:572.8px;width:21.6px;height:6px;background:#6f8f72;"></div>
<div style="left:4363.6px;top:478.4px;width:4px;height:66.4px;background:#d3d3d3;"></div>
<div style="left:4363.6px;top:544.8px;width:4px;height:58.4px;background:#8eea96;"></div>
<div class="t" style="top:491.2px;height:40px;line-height:40px;left:4381.2px;transform:scaleX(0.88);transform-origin:0 50%;">Driver</div>
<div style="left:4384px;top:572.8px;width:21.6px;height:6px;background:#6f8f72;"></div>
<div style="left:4694px;top:478.4px;width:4px;height:66.4px;background:#d3d3d3;"></div>
<div style="left:4694px;top:544.8px;width:4px;height:58.4px;background:#8eea96;"></div>
<div class="t" style="top:491.2px;height:40px;line-height:40px;left:4711.6px;transform:scaleX(0.88);transform-origin:0 50%;">Transporter</div>
<div style="left:4714.4px;top:572.8px;width:21.6px;height:6px;background:#6f8f72;"></div>
<svg style="left:725.2px;top:560.8px" width="28" height="28" viewBox="0 0 7 7"><path d="M.5.800h6L4.200 3.500V6.300L2.800 5.500V3.500z" fill="#555"/></svg>
<div style="left:708px;top:612.4px;width:4288px;height:1580.8px;overflow:hidden;background:#fff;">
<div style="left:62px;top:0px;width:976.4px;height:61.1px;background:#e0e0e0;"></div>
<div style="left:1038.4px;top:0px;width:3249.6px;height:61.1px;background:#e3e3e3;"></div>
<div style="left:62px;top:59.1px;width:976.4px;height:61.1px;background:#dcdcdc;"></div>
<div style="left:1038.4px;top:59.1px;width:3249.6px;height:61.1px;background:#e5f0fc;"></div>
<div style="left:62px;top:118.2px;width:976.4px;height:61.1px;background:#dcdcdc;"></div>
<div style="left:1038.4px;top:118.2px;width:3249.6px;height:61.1px;background:#ffffff;"></div>
<div style="left:62px;top:177.3px;width:976.4px;height:61.1px;background:#dcdcdc;"></div>
<div style="left:1038.4px;top:177.3px;width:3249.6px;height:61.1px;background:#e5f0fc;"></div>
<div style="left:62px;top:236.4px;width:976.4px;height:61.1px;background:#dcdcdc;"></div>
<div style="left:1038.4px;top:236.4px;width:3249.6px;height:61.1px;background:#ffffff;"></div>
<div style="left:62px;top:295.5px;width:976.4px;height:61.1px;background:#dcdcdc;"></div>
<div style="left:1038.4px;top:295.5px;width:3249.6px;height:61.1px;background:#e5f0fc;"></div>
<div style="left:62px;top:354.6px;width:976.4px;height:61.1px;background:#dcdcdc;"></div>
<div style="left:1038.4px;top:354.6px;width:3249.6px;height:61.1px;background:#ffffff;"></div>
<div style="left:62px;top:413.7px;width:976.4px;height:61.1px;background:#dcdcdc;"></div>
<div style="left:1038.4px;top:413.7px;width:3249.6px;height:61.1px;background:#e5f0fc;"></div>
<div style="left:62px;top:472.8px;width:976.4px;height:61.1px;background:#dcdcdc;"></div>
<div style="left:1038.4px;top:472.8px;width:3249.6px;height:61.1px;background:#ffffff;"></div>
<div style="left:62px;top:531.9px;width:976.4px;height:61.1px;background:#dcdcdc;"></div>
<div style="left:1038.4px;top:531.9px;width:3249.6px;height:61.1px;background:#e5f0fc;"></div>
<div style="left:62px;top:591px;width:976.4px;height:61.1px;background:#dcdcdc;"></div>
<div style="left:1038.4px;top:591px;width:3249.6px;height:61.1px;background:#ffffff;"></div>
<div style="left:62px;top:650.1px;width:976.4px;height:61.1px;background:#dcdcdc;"></div>
<div style="left:1038.4px;top:650.1px;width:3249.6px;height:61.1px;background:#e5f0fc;"></div>
<div style="left:62px;top:709.2px;width:976.4px;height:61.1px;background:#dcdcdc;"></div>
<div style="left:1038.4px;top:709.2px;width:3249.6px;height:61.1px;background:#ffffff;"></div>
<div style="left:62px;top:768.3px;width:976.4px;height:61.1px;background:#dcdcdc;"></div>
<div style="left:1038.4px;top:768.3px;width:3249.6px;height:61.1px;background:#e5f0fc;"></div>
<div style="left:62px;top:827.4px;width:976.4px;height:61.1px;background:#dcdcdc;"></div>
<div style="left:1038.4px;top:827.4px;width:3249.6px;height:61.1px;background:#ffffff;"></div>
<div style="left:62px;top:886.5px;width:976.4px;height:61.1px;background:#dcdcdc;"></div>
<div style="left:1038.4px;top:886.5px;width:3249.6px;height:61.1px;background:#e5f0fc;"></div>
<div style="left:62px;top:945.6px;width:976.4px;height:61.1px;background:#dcdcdc;"></div>
<div style="left:1038.4px;top:945.6px;width:3249.6px;height:61.1px;background:#ffffff;"></div>
<div style="left:62px;top:1004.7px;width:976.4px;height:61.1px;background:#dcdcdc;"></div>
<div style="left:1038.4px;top:1004.7px;width:3249.6px;height:61.1px;background:#e5f0fc;"></div>
<div style="left:62px;top:1063.8px;width:976.4px;height:61.1px;background:#dcdcdc;"></div>
<div style="left:1038.4px;top:1063.8px;width:3249.6px;height:61.1px;background:#ffffff;"></div>
<div style="left:62px;top:1122.9px;width:976.4px;height:61.1px;background:#dcdcdc;"></div>
<div style="left:1038.4px;top:1122.9px;width:3249.6px;height:61.1px;background:#e5f0fc;"></div>
<div style="left:62px;top:1182px;width:976.4px;height:61.1px;background:#dcdcdc;"></div>
<div style="left:1038.4px;top:1182px;width:3249.6px;height:61.1px;background:#ffffff;"></div>
<div style="left:62px;top:1241.1px;width:976.4px;height:61.1px;background:#dcdcdc;"></div>
<div style="left:1038.4px;top:1241.1px;width:3249.6px;height:61.1px;background:#e5f0fc;"></div>
<div style="left:62px;top:1300.2px;width:976.4px;height:61.1px;background:#dcdcdc;"></div>
<div style="left:1038.4px;top:1300.2px;width:3249.6px;height:61.1px;background:#ffffff;"></div>
<div style="left:62px;top:1359.3px;width:976.4px;height:61.1px;background:#dcdcdc;"></div>
<div style="left:1038.4px;top:1359.3px;width:3249.6px;height:61.1px;background:#e5f0fc;"></div>
<div style="left:62px;top:1418.4px;width:976.4px;height:61.1px;background:#dcdcdc;"></div>
<div style="left:1038.4px;top:1418.4px;width:3249.6px;height:61.1px;background:#ffffff;"></div>
<div style="left:62px;top:1477.5px;width:976.4px;height:61.1px;background:#dcdcdc;"></div>
<div style="left:1038.4px;top:1477.5px;width:3249.6px;height:61.1px;background:#e5f0fc;"></div>
<div style="left:62px;top:1536.6px;width:976.4px;height:61.1px;background:#dcdcdc;"></div>
<div style="left:1038.4px;top:1536.6px;width:3249.6px;height:61.1px;background:#ffffff;"></div>
<div style="left:62px;top:57.1px;width:976.4px;height:4px;background:#d2d2d2;"></div>
<div style="left:1038.4px;top:57.1px;width:3249.6px;height:4px;background:#dddddd;"></div>
<div style="left:62px;top:116.2px;width:976.4px;height:4px;background:#d2d2d2;"></div>
<div style="left:1038.4px;top:116.2px;width:3249.6px;height:4px;background:#dddddd;"></div>
<div style="left:62px;top:175.3px;width:976.4px;height:4px;background:#d2d2d2;"></div>
<div style="left:1038.4px;top:175.3px;width:3249.6px;height:4px;background:#dddddd;"></div>
<div style="left:62px;top:234.4px;width:976.4px;height:4px;background:#d2d2d2;"></div>
<div style="left:1038.4px;top:234.4px;width:3249.6px;height:4px;background:#dddddd;"></div>
<div style="left:62px;top:293.5px;width:976.4px;height:4px;background:#d2d2d2;"></div>
<div style="left:1038.4px;top:293.5px;width:3249.6px;height:4px;background:#dddddd;"></div>
<div style="left:62px;top:352.6px;width:976.4px;height:4px;background:#d2d2d2;"></div>
<div style="left:1038.4px;top:352.6px;width:3249.6px;height:4px;background:#dddddd;"></div>
<div style="left:62px;top:411.7px;width:976.4px;height:4px;background:#d2d2d2;"></div>
<div style="left:1038.4px;top:411.7px;width:3249.6px;height:4px;background:#dddddd;"></div>
<div style="left:62px;top:470.8px;width:976.4px;height:4px;background:#d2d2d2;"></div>
<div style="left:1038.4px;top:470.8px;width:3249.6px;height:4px;background:#dddddd;"></div>
<div style="left:62px;top:529.9px;width:976.4px;height:4px;background:#d2d2d2;"></div>
<div style="left:1038.4px;top:529.9px;width:3249.6px;height:4px;background:#dddddd;"></div>
<div style="left:62px;top:589px;width:976.4px;height:4px;background:#d2d2d2;"></div>
<div style="left:1038.4px;top:589px;width:3249.6px;height:4px;background:#dddddd;"></div>
<div style="left:62px;top:648.1px;width:976.4px;height:4px;background:#d2d2d2;"></div>
<div style="left:1038.4px;top:648.1px;width:3249.6px;height:4px;background:#dddddd;"></div>
<div style="left:62px;top:707.2px;width:976.4px;height:4px;background:#d2d2d2;"></div>
<div style="left:1038.4px;top:707.2px;width:3249.6px;height:4px;background:#dddddd;"></div>
<div style="left:62px;top:766.3px;width:976.4px;height:4px;background:#d2d2d2;"></div>
<div style="left:1038.4px;top:766.3px;width:3249.6px;height:4px;background:#dddddd;"></div>
<div style="left:62px;top:825.4px;width:976.4px;height:4px;background:#d2d2d2;"></div>
<div style="left:1038.4px;top:825.4px;width:3249.6px;height:4px;background:#dddddd;"></div>
<div style="left:62px;top:884.5px;width:976.4px;height:4px;background:#d2d2d2;"></div>
<div style="left:1038.4px;top:884.5px;width:3249.6px;height:4px;background:#dddddd;"></div>
<div style="left:62px;top:943.6px;width:976.4px;height:4px;background:#d2d2d2;"></div>
<div style="left:1038.4px;top:943.6px;width:3249.6px;height:4px;background:#dddddd;"></div>
<div style="left:62px;top:1002.7px;width:976.4px;height:4px;background:#d2d2d2;"></div>
<div style="left:1038.4px;top:1002.7px;width:3249.6px;height:4px;background:#dddddd;"></div>
<div style="left:62px;top:1061.8px;width:976.4px;height:4px;background:#d2d2d2;"></div>
<div style="left:1038.4px;top:1061.8px;width:3249.6px;height:4px;background:#dddddd;"></div>
<div style="left:62px;top:1120.9px;width:976.4px;height:4px;background:#d2d2d2;"></div>
<div style="left:1038.4px;top:1120.9px;width:3249.6px;height:4px;background:#dddddd;"></div>
<div style="left:62px;top:1180px;width:976.4px;height:4px;background:#d2d2d2;"></div>
<div style="left:1038.4px;top:1180px;width:3249.6px;height:4px;background:#dddddd;"></div>
<div style="left:62px;top:1239.1px;width:976.4px;height:4px;background:#d2d2d2;"></div>
<div style="left:1038.4px;top:1239.1px;width:3249.6px;height:4px;background:#dddddd;"></div>
<div style="left:62px;top:1298.2px;width:976.4px;height:4px;background:#d2d2d2;"></div>
<div style="left:1038.4px;top:1298.2px;width:3249.6px;height:4px;background:#dddddd;"></div>
<div style="left:62px;top:1357.3px;width:976.4px;height:4px;background:#d2d2d2;"></div>
<div style="left:1038.4px;top:1357.3px;width:3249.6px;height:4px;background:#dddddd;"></div>
<div style="left:62px;top:1416.4px;width:976.4px;height:4px;background:#d2d2d2;"></div>
<div style="left:1038.4px;top:1416.4px;width:3249.6px;height:4px;background:#dddddd;"></div>
<div style="left:62px;top:1475.5px;width:976.4px;height:4px;background:#d2d2d2;"></div>
<div style="left:1038.4px;top:1475.5px;width:3249.6px;height:4px;background:#dddddd;"></div>
<div style="left:62px;top:1534.6px;width:976.4px;height:4px;background:#d2d2d2;"></div>
<div style="left:1038.4px;top:1534.6px;width:3249.6px;height:4px;background:#dddddd;"></div>
<div style="left:62px;top:1593.7px;width:976.4px;height:4px;background:#d2d2d2;"></div>
<div style="left:1038.4px;top:1593.7px;width:3249.6px;height:4px;background:#dddddd;"></div>
<div style="left:0px;top:0px;width:62px;height:59.1px;background:#f0f0f0;"></div>
<svg style="left:16.4px;top:18.55px" width="28" height="20" viewBox="0 0 7 5"><path d="M.5 2.500h5M3.800.7l1.900 1.800-1.900 1.800" fill="none" stroke="#3b86d4" stroke-width=".8"/></svg>
<div class="tsel" style="top:7.75px;height:40px;line-height:40px;left:79.2px;transform:scaleX(0.88);transform-origin:0 50%;width:200.45px;overflow:hidden;">19-00007</div>
<div class="tsel" style="top:7.75px;height:40px;line-height:40px;left:271.6px;transform:scaleX(0.88);transform-origin:0 50%;width:332.27px;overflow:hidden;">Client <i>ANK</i>E Test</div>
<div class="tsel" style="top:7.75px;height:40px;line-height:40px;right:3649.4px;transform:scaleX(0.88);transform-origin:100% 50%;">13</div>
<div class="tsel" style="top:7.75px;height:40px;line-height:40px;left:667px;transform:scaleX(0.88);transform-origin:0 50%;width:85.68px;overflow:hidden;"><i>P</i>X</div>
<div class="tsel" style="top:7.75px;height:40px;line-height:40px;right:3416.4px;transform:scaleX(0.88);transform-origin:100% 50%;">526.00</div>
<div class="tsel" style="top:7.75px;height:40px;line-height:40px;right:3264px;transform:scaleX(0.88);transform-origin:100% 50%;">3.800</div>
<div class="tsel" style="top:7.75px;height:40px;line-height:40px;left:1287.2px;transform:scaleX(0.88);transform-origin:0 50%;width:257.05px;overflow:hidden;"><i>LARNAC</i>A (<i>LC</i>A&nbsp; )</div>
<svg style="left:1778.8px;top:10.15px" width="48" height="36" viewBox="0 0 12 9"><path d="M1 .8h7.800L11 3v5.200H1z" fill="#fbfbfb" stroke="#7a7a7a" stroke-width=".8"/><path d="M8.800.8V3H11" fill="none" stroke="#7a7a7a" stroke-width=".6"/><path d="M4 6.800 5.700 2.500 7.400 6.800M4.700 5.300h2" fill="none" stroke="#3b86d4" stroke-width=".9"/></svg>
<div class="tsel" style="top:7.75px;height:40px;line-height:40px;left:1944px;transform:scaleX(0.88);transform-origin:0 50%;width:256.82px;overflow:hidden;"><i>LIMASSO</i>L (<i>CY</i>L…</div>
<div class="tsel" style="top:7.75px;height:40px;line-height:40px;left:2187.6px;transform:scaleX(0.88);transform-origin:0 50%;width:157.27px;overflow:hidden;">3344</div>
<svg style="left:2434.5px;top:10.15px" width="48" height="36" viewBox="0 0 12 9"><path d="M1 .8h7.800L11 3v5.200H1z" fill="#fbfbfb" stroke="#7a7a7a" stroke-width=".8"/><path d="M8.800.8V3H11" fill="none" stroke="#7a7a7a" stroke-width=".6"/><path d="M4 6.800 5.700 2.500 7.400 6.800M4.700 5.300h2" fill="none" stroke="#3b86d4" stroke-width=".9"/></svg>
<div class="tsel" style="top:7.75px;height:40px;line-height:40px;left:2599px;transform:scaleX(0.88);transform-origin:0 50%;width:216.14px;overflow:hidden;">25/10/2020</div>
<div class="tsel" style="top:7.75px;height:40px;line-height:40px;left:2289.2px;width:1200px;text-align:center;transform:scaleX(0.88);transform-origin:50% 50%;">10:00</div>
<div class="tsel" style="top:7.75px;height:40px;line-height:40px;left:3007.6px;transform:scaleX(0.88);transform-origin:0 50%;">14:00</div>
<div style="left:3259.6px;top:8.55px;width:40px;height:40px;background:#fff;border:4px solid #b9b9b9;border-radius:4px;"></div>
<div class="tsel" style="top:7.75px;height:40px;line-height:40px;left:3391.6px;transform:scaleX(0.88);transform-origin:0 50%;width:175px;overflow:hidden;"><i>KY</i>A506</div>
<div class="tsel" style="top:7.75px;height:40px;line-height:40px;right:644.8px;transform:scaleX(0.88);transform-origin:100% 50%;">1</div>
<div class="tsel" style="top:7.75px;height:40px;line-height:40px;left:3671.6px;transform:scaleX(0.88);transform-origin:0 50%;width:355.45px;overflow:hidden;">Savvas Sarris</div>
<div class="tsel" style="top:7.75px;height:40px;line-height:40px;left:4002px;transform:scaleX(0.88);transform-origin:0 50%;width:320.91px;overflow:hidden;">Transporter <i>LM</i>S Test (</div>
<svg style="left:3104px;top:10.55px" width="16" height="36" viewBox="0 0 4 9"><path d="M.4 3 2 .8 3.600 3zM.4 6 2 8.200 3.600 6z" fill="#555"/></svg>
<svg style="left:3143.2px;top:18.55px" width="20" height="20" viewBox="0 0 5 5"><path d="M.7.700l3.600 3.600M4.300.700.7 4.300" stroke="#e8401c" stroke-width="1.100"/></svg>
<div class="t" style="top:66.85px;height:40px;line-height:40px;left:79.2px;transform:scaleX(0.88);transform-origin:0 50%;width:200.45px;overflow:hidden;">20-00002</div>
<div class="t" style="top:66.85px;height:40px;line-height:40px;left:271.6px;transform:scaleX(0.88);transform-origin:0 50%;width:332.27px;overflow:hidden;">Client <i>ANK</i>E Test</div>
<div class="t" style="top:66.85px;height:40px;line-height:40px;right:3649.4px;transform:scaleX(0.88);transform-origin:100% 50%;">9</div>
<div class="t" style="top:66.85px;height:40px;line-height:40px;left:667px;transform:scaleX(0.88);transform-origin:0 50%;width:85.68px;overflow:hidden;"><i>P</i>B</div>
<div class="t" style="top:66.85px;height:40px;line-height:40px;right:3416.4px;transform:scaleX(0.88);transform-origin:100% 50%;">12,345…</div>
<div class="t" style="top:66.85px;height:40px;line-height:40px;right:3264px;transform:scaleX(0.88);transform-origin:100% 50%;">12.000</div>
<svg style="left:1778.8px;top:69.25px" width="48" height="36" viewBox="0 0 12 9"><path d="M1 .8h7.800L11 3v5.200H1z" fill="#fbfbfb" stroke="#7a7a7a" stroke-width=".8"/><path d="M8.800.8V3H11" fill="none" stroke="#7a7a7a" stroke-width=".6"/><path d="M4 6.800 5.700 2.500 7.400 6.800M4.700 5.300h2" fill="none" stroke="#3b86d4" stroke-width=".9"/></svg>
<div class="t" style="top:66.85px;height:40px;line-height:40px;left:1944px;transform:scaleX(0.88);transform-origin:0 50%;width:256.82px;overflow:hidden;"><i>LIMASSO</i>L (<i>CY</i>L…</div>
<div class="t" style="top:66.85px;height:40px;line-height:40px;left:2187.6px;transform:scaleX(0.88);transform-origin:0 50%;width:157.27px;overflow:hidden;">3344</div>
<svg style="left:2434.5px;top:69.25px" width="48" height="36" viewBox="0 0 12 9"><path d="M1 .8h7.800L11 3v5.200H1z" fill="#fbfbfb" stroke="#7a7a7a" stroke-width=".8"/><path d="M8.800.8V3H11" fill="none" stroke="#7a7a7a" stroke-width=".6"/><path d="M4 6.800 5.700 2.500 7.400 6.800M4.700 5.300h2" fill="none" stroke="#3b86d4" stroke-width=".9"/></svg>
<div class="t" style="top:66.85px;height:40px;line-height:40px;left:2599px;transform:scaleX(0.88);transform-origin:0 50%;width:216.14px;overflow:hidden;">22/10/2020</div>
<div style="left:3259.6px;top:67.65px;width:40px;height:40px;background:#fff;border:4px solid #b9b9b9;border-radius:4px;"></div>
<div class="t" style="top:66.85px;height:40px;line-height:40px;right:644.8px;transform:scaleX(0.88);transform-origin:100% 50%;">1</div>
<div class="t" style="top:125.95px;height:40px;line-height:40px;left:79.2px;transform:scaleX(0.88);transform-origin:0 50%;width:200.45px;overflow:hidden;">20-00004</div>
<div class="t" style="top:125.95px;height:40px;line-height:40px;left:271.6px;transform:scaleX(0.88);transform-origin:0 50%;width:332.27px;overflow:hidden;">Client <i>LM</i>S Test</div>
<div class="t" style="top:125.95px;height:40px;line-height:40px;right:3649.4px;transform:scaleX(0.88);transform-origin:100% 50%;">15</div>
<div class="t" style="top:125.95px;height:40px;line-height:40px;left:667px;transform:scaleX(0.88);transform-origin:0 50%;width:85.68px;overflow:hidden;"><i>P</i>K</div>
<div class="t" style="top:125.95px;height:40px;line-height:40px;right:3416.4px;transform:scaleX(0.88);transform-origin:100% 50%;">3,050.…</div>
<div class="t" style="top:125.95px;height:40px;line-height:40px;right:3264px;transform:scaleX(0.88);transform-origin:100% 50%;">8.000</div>
<svg style="left:1778.8px;top:128.35px" width="48" height="36" viewBox="0 0 12 9"><path d="M1 .8h7.800L11 3v5.200H1z" fill="#fbfbfb" stroke="#7a7a7a" stroke-width=".8"/><path d="M8.800.8V3H11" fill="none" stroke="#7a7a7a" stroke-width=".6"/><path d="M4 6.800 5.700 2.500 7.400 6.800M4.700 5.300h2" fill="none" stroke="#3b86d4" stroke-width=".9"/></svg>
<div class="t" style="top:125.95px;height:40px;line-height:40px;left:1944px;transform:scaleX(0.88);transform-origin:0 50%;width:256.82px;overflow:hidden;"><i>LIMASSO</i>L (<i>CY</i>L…</div>
<div class="t" style="top:125.95px;height:40px;line-height:40px;left:2187.6px;transform:scaleX(0.88);transform-origin:0 50%;width:157.27px;overflow:hidden;">3052</div>
<svg style="left:2434.5px;top:128.35px" width="48" height="36" viewBox="0 0 12 9"><path d="M1 .8h7.800L11 3v5.200H1z" fill="#fbfbfb" stroke="#7a7a7a" stroke-width=".8"/><path d="M8.800.8V3H11" fill="none" stroke="#7a7a7a" stroke-width=".6"/><path d="M4 6.800 5.700 2.500 7.400 6.800M4.700 5.300h2" fill="none" stroke="#3b86d4" stroke-width=".9"/></svg>
<div class="t" style="top:125.95px;height:40px;line-height:40px;left:2599px;transform:scaleX(0.88);transform-origin:0 50%;width:216.14px;overflow:hidden;">30/09/2021</div>
<div class="t" style="top:125.95px;height:40px;line-height:40px;left:2289.2px;width:1200px;text-align:center;transform:scaleX(0.88);transform-origin:50% 50%;">10:00</div>
<div style="left:3259.6px;top:126.75px;width:40px;height:40px;background:#fff;border:4px solid #b9b9b9;border-radius:4px;"></div>
<div class="t" style="top:125.95px;height:40px;line-height:40px;left:3391.6px;transform:scaleX(0.88);transform-origin:0 50%;width:175px;overflow:hidden;"><i>KY</i>A506</div>
<div class="t" style="top:125.95px;height:40px;line-height:40px;right:644.8px;transform:scaleX(0.88);transform-origin:100% 50%;">1</div>
<div class="t" style="top:125.95px;height:40px;line-height:40px;left:4002px;transform:scaleX(0.88);transform-origin:0 50%;width:320.91px;overflow:hidden;">Transporter <i>LM</i>S Test (</div>
<div class="t" style="top:185.05px;height:40px;line-height:40px;left:79.2px;transform:scaleX(0.88);transform-origin:0 50%;width:200.45px;overflow:hidden;">20-00008</div>
<div class="t" style="top:185.05px;height:40px;line-height:40px;left:271.6px;transform:scaleX(0.88);transform-origin:0 50%;width:332.27px;overflow:hidden;"><i>NE</i>W <i>TESTIN</i>G <i>CLIEN</i>T</div>
<div class="t" style="top:185.05px;height:40px;line-height:40px;right:3649.4px;transform:scaleX(0.88);transform-origin:100% 50%;">1</div>
<div class="t" style="top:185.05px;height:40px;line-height:40px;left:667px;transform:scaleX(0.88);transform-origin:0 50%;width:85.68px;overflow:hidden;"><i>N</i>A1</div>
<div class="t" style="top:185.05px;height:40px;line-height:40px;right:3416.4px;transform:scaleX(0.88);transform-origin:100% 50%;">200.00</div>
<div class="t" style="top:185.05px;height:40px;line-height:40px;right:3264px;transform:scaleX(0.88);transform-origin:100% 50%;">3.000</div>
<svg style="left:1778.8px;top:187.45px" width="48" height="36" viewBox="0 0 12 9"><path d="M1 .8h7.800L11 3v5.200H1z" fill="#fbfbfb" stroke="#7a7a7a" stroke-width=".8"/><path d="M8.800.8V3H11" fill="none" stroke="#7a7a7a" stroke-width=".6"/><path d="M4 6.800 5.700 2.500 7.400 6.800M4.700 5.300h2" fill="none" stroke="#3b86d4" stroke-width=".9"/></svg>
<div class="t" style="top:185.05px;height:40px;line-height:40px;left:1944px;transform:scaleX(0.88);transform-origin:0 50%;width:256.82px;overflow:hidden;"><i>LIMASSO</i>L (<i>CY</i>L…</div>
<div class="t" style="top:185.05px;height:40px;line-height:40px;left:2187.6px;transform:scaleX(0.88);transform-origin:0 50%;width:157.27px;overflow:hidden;">3027</div>
<svg style="left:2434.5px;top:187.45px" width="48" height="36" viewBox="0 0 12 9"><path d="M1 .8h7.800L11 3v5.200H1z" fill="#fbfbfb" stroke="#7a7a7a" stroke-width=".8"/><path d="M8.800.8V3H11" fill="none" stroke="#7a7a7a" stroke-width=".6"/><path d="M4 6.800 5.700 2.500 7.400 6.800M4.700 5.300h2" fill="none" stroke="#3b86d4" stroke-width=".9"/></svg>
<div class="t" style="top:185.05px;height:40px;line-height:40px;left:2599px;transform:scaleX(0.88);transform-origin:0 50%;width:216.14px;overflow:hidden;">10/09/2021</div>
<div class="t" style="top:185.05px;height:40px;line-height:40px;left:2289.2px;width:1200px;text-align:center;transform:scaleX(0.88);transform-origin:50% 50%;">08:00</div>
<div class="t" style="top:185.05px;height:40px;line-height:40px;left:2481.6px;width:1200px;text-align:center;transform:scaleX(0.88);transform-origin:50% 50%;">12:00</div>
<div style="left:3259.6px;top:185.85px;width:40px;height:40px;background:#fff;border:4px solid #b9b9b9;border-radius:4px;"></div>
<div class="t" style="top:185.05px;height:40px;line-height:40px;right:644.8px;transform:scaleX(0.88);transform-origin:100% 50%;">1</div>
<div class="t" style="top:185.05px;height:40px;line-height:40px;left:4002px;transform:scaleX(0.88);transform-origin:0 50%;width:320.91px;overflow:hidden;">Transporter <i>LM</i>S Test (</div>
<div class="t" style="top:244.15px;height:40px;line-height:40px;left:79.2px;transform:scaleX(0.88);transform-origin:0 50%;width:200.45px;overflow:hidden;">20-00010</div>
<div class="t" style="top:244.15px;height:40px;line-height:40px;left:271.6px;transform:scaleX(0.88);transform-origin:0 50%;width:332.27px;overflow:hidden;">Client <i>ANK</i>E Test ltd</div>
<div class="t" style="top:244.15px;height:40px;line-height:40px;right:3649.4px;transform:scaleX(0.88);transform-origin:100% 50%;">5</div>
<div class="t" style="top:244.15px;height:40px;line-height:40px;left:667px;transform:scaleX(0.88);transform-origin:0 50%;width:85.68px;overflow:hidden;"><i>P</i>K</div>
<div class="t" style="top:244.15px;height:40px;line-height:40px;right:3416.4px;transform:scaleX(0.88);transform-origin:100% 50%;">1,320.…</div>
<div class="t" style="top:244.15px;height:40px;line-height:40px;right:3264px;transform:scaleX(0.88);transform-origin:100% 50%;">5.000</div>
<div class="t" style="top:244.15px;height:40px;line-height:40px;left:1052.4px;transform:scaleX(0.88);transform-origin:0 50%;width:246.82px;overflow:hidden;"><i>S</i>S1</div>
<svg style="left:1778.8px;top:246.55px" width="48" height="36" viewBox="0 0 12 9"><path d="M1 .8h7.800L11 3v5.200H1z" fill="#fbfbfb" stroke="#7a7a7a" stroke-width=".8"/><path d="M8.800.8V3H11" fill="none" stroke="#7a7a7a" stroke-width=".6"/><path d="M4 6.800 5.700 2.500 7.400 6.800M4.700 5.300h2" fill="none" stroke="#3b86d4" stroke-width=".9"/></svg>
<div class="t" style="top:244.15px;height:40px;line-height:40px;left:1944px;transform:scaleX(0.88);transform-origin:0 50%;width:256.82px;overflow:hidden;"><i>LIMASSO</i>L (<i>CY</i>L…</div>
<div class="t" style="top:244.15px;height:40px;line-height:40px;left:2187.6px;transform:scaleX(0.88);transform-origin:0 50%;width:157.27px;overflow:hidden;">3344</div>
<svg style="left:2434.5px;top:246.55px" width="48" height="36" viewBox="0 0 12 9"><path d="M1 .8h7.800L11 3v5.200H1z" fill="#fbfbfb" stroke="#7a7a7a" stroke-width=".8"/><path d="M8.800.8V3H11" fill="none" stroke="#7a7a7a" stroke-width=".6"/><path d="M4 6.800 5.700 2.500 7.400 6.800M4.700 5.300h2" fill="none" stroke="#3b86d4" stroke-width=".9"/></svg>
<div class="t" style="top:244.15px;height:40px;line-height:40px;left:2599px;transform:scaleX(0.88);transform-origin:0 50%;width:216.14px;overflow:hidden;">20/10/2020</div>
<div class="t" style="top:244.15px;height:40px;line-height:40px;left:2289.2px;width:1200px;text-align:center;transform:scaleX(0.88);transform-origin:50% 50%;">01:00</div>
<div class="t" style="top:244.15px;height:40px;line-height:40px;left:2481.6px;width:1200px;text-align:center;transform:scaleX(0.88);transform-origin:50% 50%;">02:00</div>
<div style="left:3259.6px;top:244.95px;width:40px;height:40px;background:#fff;border:4px solid #b9b9b9;border-radius:4px;"></div>
<div class="t" style="top:244.15px;height:40px;line-height:40px;left:3391.6px;transform:scaleX(0.88);transform-origin:0 50%;width:175px;overflow:hidden;"><i>KK</i>K</div>
<div class="t" style="top:244.15px;height:40px;line-height:40px;right:644.8px;transform:scaleX(0.88);transform-origin:100% 50%;">1</div>
<div class="t" style="top:244.15px;height:40px;line-height:40px;left:3671.6px;transform:scaleX(0.88);transform-origin:0 50%;width:355.45px;overflow:hidden;">Savvas Sarris</div>
<div class="t" style="top:244.15px;height:40px;line-height:40px;left:4002px;transform:scaleX(0.88);transform-origin:0 50%;width:320.91px;overflow:hidden;">Transporter <i>LM</i>S Test (</div>
<div class="t" style="top:303.25px;height:40px;line-height:40px;left:79.2px;transform:scaleX(0.88);transform-origin:0 50%;width:200.45px;overflow:hidden;">20-00011</div>
<div class="t" style="top:303.25px;height:40px;line-height:40px;left:271.6px;transform:scaleX(0.88);transform-origin:0 50%;width:332.27px;overflow:hidden;">Client <i>LC</i>A Test</div>
<div class="t" style="top:303.25px;height:40px;line-height:40px;right:3649.4px;transform:scaleX(0.88);transform-origin:100% 50%;">1</div>
<div class="t" style="top:303.25px;height:40px;line-height:40px;left:667px;transform:scaleX(0.88);transform-origin:0 50%;width:85.68px;overflow:hidden;"><i>P</i>K</div>
<div class="t" style="top:303.25px;height:40px;line-height:40px;right:3416.4px;transform:scaleX(0.88);transform-origin:100% 50%;">10.00</div>
<div class="t" style="top:303.25px;height:40px;line-height:40px;right:3264px;transform:scaleX(0.88);transform-origin:100% 50%;">0.500</div>
<svg style="left:1778.8px;top:305.65px" width="48" height="36" viewBox="0 0 12 9"><path d="M1 .8h7.800L11 3v5.200H1z" fill="#fbfbfb" stroke="#7a7a7a" stroke-width=".8"/><path d="M8.800.8V3H11" fill="none" stroke="#7a7a7a" stroke-width=".6"/><path d="M4 6.800 5.700 2.500 7.400 6.800M4.700 5.300h2" fill="none" stroke="#3b86d4" stroke-width=".9"/></svg>
<div class="t" style="top:303.25px;height:40px;line-height:40px;left:1944px;transform:scaleX(0.88);transform-origin:0 50%;width:256.82px;overflow:hidden;"><i>LARNAC</i>A (<i>LC</i>A&nbsp; )</div>
<div class="t" style="top:303.25px;height:40px;line-height:40px;left:2187.6px;transform:scaleX(0.88);transform-origin:0 50%;width:157.27px;overflow:hidden;">7550</div>
<svg style="left:2434.5px;top:305.65px" width="48" height="36" viewBox="0 0 12 9"><path d="M1 .8h7.800L11 3v5.200H1z" fill="#fbfbfb" stroke="#7a7a7a" stroke-width=".8"/><path d="M8.800.8V3H11" fill="none" stroke="#7a7a7a" stroke-width=".6"/><path d="M4 6.800 5.700 2.500 7.400 6.800M4.700 5.300h2" fill="none" stroke="#3b86d4" stroke-width=".9"/></svg>
<div class="t" style="top:303.25px;height:40px;line-height:40px;left:2599px;transform:scaleX(0.88);transform-origin:0 50%;width:216.14px;overflow:hidden;">20/10/2020</div>
<div style="left:3259.6px;top:304.05px;width:40px;height:40px;background:#fff;border:4px solid #b9b9b9;border-radius:4px;"></div>
<div class="t" style="top:303.25px;height:40px;line-height:40px;right:644.8px;transform:scaleX(0.88);transform-origin:100% 50%;">1</div>
<div class="t" style="top:303.25px;height:40px;line-height:40px;left:4002px;transform:scaleX(0.88);transform-origin:0 50%;width:320.91px;overflow:hidden;">Transporter <i>LM</i>S Test (</div>
<div class="t" style="top:362.35px;height:40px;line-height:40px;left:79.2px;transform:scaleX(0.88);transform-origin:0 50%;width:200.45px;overflow:hidden;">20-00013</div>
<div class="t" style="top:362.35px;height:40px;line-height:40px;left:271.6px;transform:scaleX(0.88);transform-origin:0 50%;width:332.27px;overflow:hidden;">Client Test <i>LIMASS</i>O…</div>
<div class="t" style="top:362.35px;height:40px;line-height:40px;right:3649.4px;transform:scaleX(0.88);transform-origin:100% 50%;">1</div>
<div class="t" style="top:362.35px;height:40px;line-height:40px;left:667px;transform:scaleX(0.88);transform-origin:0 50%;width:85.68px;overflow:hidden;"><i>P</i>X</div>
<div class="t" style="top:362.35px;height:40px;line-height:40px;right:3416.4px;transform:scaleX(0.88);transform-origin:100% 50%;">685.00</div>
<div class="t" style="top:362.35px;height:40px;line-height:40px;right:3264px;transform:scaleX(0.88);transform-origin:100% 50%;">2.700</div>
<svg style="left:1778.8px;top:364.75px" width="48" height="36" viewBox="0 0 12 9"><path d="M1 .8h7.800L11 3v5.200H1z" fill="#fbfbfb" stroke="#7a7a7a" stroke-width=".8"/><path d="M8.800.8V3H11" fill="none" stroke="#7a7a7a" stroke-width=".6"/><path d="M4 6.800 5.700 2.500 7.400 6.800M4.700 5.300h2" fill="none" stroke="#3b86d4" stroke-width=".9"/></svg>
<svg style="left:2434.5px;top:364.75px" width="48" height="36" viewBox="0 0 12 9"><path d="M1 .8h7.800L11 3v5.200H1z" fill="#fbfbfb" stroke="#7a7a7a" stroke-width=".8"/><path d="M8.800.8V3H11" fill="none" stroke="#7a7a7a" stroke-width=".6"/><path d="M4 6.800 5.700 2.500 7.400 6.800M4.700 5.300h2" fill="none" stroke="#3b86d4" stroke-width=".9"/></svg>
<div style="left:3259.6px;top:363.15px;width:40px;height:40px;background:#fff;border:4px solid #b9b9b9;border-radius:4px;"></div>
<div class="t" style="top:362.35px;height:40px;line-height:40px;left:4002px;transform:scaleX(0.88);transform-origin:0 50%;width:320.91px;overflow:hidden;">Transporter <i>LM</i>S Test (</div>
<div class="t" style="top:421.45px;height:40px;line-height:40px;left:79.2px;transform:scaleX(0.88);transform-origin:0 50%;width:200.45px;overflow:hidden;">20-00014</div>
<div class="t" style="top:421.45px;height:40px;line-height:40px;left:271.6px;transform:scaleX(0.88);transform-origin:0 50%;width:332.27px;overflow:hidden;">Client <i>ANK</i>E Test ltd</div>
<div class="t" style="top:421.45px;height:40px;line-height:40px;right:3649.4px;transform:scaleX(0.88);transform-origin:100% 50%;">11</div>
<div class="t" style="top:421.45px;height:40px;line-height:40px;left:667px;transform:scaleX(0.88);transform-origin:0 50%;width:85.68px;overflow:hidden;"><i>P</i>K</div>
<div class="t" style="top:421.45px;height:40px;line-height:40px;right:3416.4px;transform:scaleX(0.88);transform-origin:100% 50%;">143.00</div>
<div class="t" style="top:421.45px;height:40px;line-height:40px;right:3264px;transform:scaleX(0.88);transform-origin:100% 50%;">1.200</div>
<svg style="left:1778.8px;top:423.85px" width="48" height="36" viewBox="0 0 12 9"><path d="M1 .8h7.800L11 3v5.200H1z" fill="#fbfbfb" stroke="#7a7a7a" stroke-width=".8"/><path d="M8.800.8V3H11" fill="none" stroke="#7a7a7a" stroke-width=".6"/><path d="M4 6.800 5.700 2.500 7.400 6.800M4.700 5.300h2" fill="none" stroke="#3b86d4" stroke-width=".9"/></svg>
<svg style="left:2434.5px;top:423.85px" width="48" height="36" viewBox="0 0 12 9"><path d="M1 .8h7.800L11 3v5.200H1z" fill="#fbfbfb" stroke="#7a7a7a" stroke-width=".8"/><path d="M8.800.8V3H11" fill="none" stroke="#7a7a7a" stroke-width=".6"/><path d="M4 6.800 5.700 2.500 7.400 6.800M4.700 5.300h2" fill="none" stroke="#3b86d4" stroke-width=".9"/></svg>
<div style="left:3259.6px;top:422.25px;width:40px;height:40px;background:#fff;border:4px solid #b9b9b9;border-radius:4px;"></div>
<div class="t" style="top:421.45px;height:40px;line-height:40px;left:4002px;transform:scaleX(0.88);transform-origin:0 50%;width:320.91px;overflow:hidden;">Transporter <i>LM</i>S Test (</div>
<div class="t" style="top:480.55px;height:40px;line-height:40px;left:79.2px;transform:scaleX(0.88);transform-origin:0 50%;width:200.45px;overflow:hidden;">20-00015</div>
<div class="t" style="top:480.55px;height:40px;line-height:40px;left:271.6px;transform:scaleX(0.88);transform-origin:0 50%;width:332.27px;overflow:hidden;">Client Trading <i>LT</i>D</div>
<div class="t" style="top:480.55px;height:40px;line-height:40px;right:3649.4px;transform:scaleX(0.88);transform-origin:100% 50%;">8</div>
<div class="t" style="top:480.55px;height:40px;line-height:40px;left:667px;transform:scaleX(0.88);transform-origin:0 50%;width:85.68px;overflow:hidden;"><i>P</i>X</div>
<div class="t" style="top:480.55px;height:40px;line-height:40px;right:3416.4px;transform:scaleX(0.88);transform-origin:100% 50%;">2,495.…</div>
<div class="t" style="top:480.55px;height:40px;line-height:40px;right:3264px;transform:scaleX(0.88);transform-origin:100% 50%;">12.000</div>
<svg style="left:1778.8px;top:482.95px" width="48" height="36" viewBox="0 0 12 9"><path d="M1 .8h7.800L11 3v5.200H1z" fill="#fbfbfb" stroke="#7a7a7a" stroke-width=".8"/><path d="M8.800.8V3H11" fill="none" stroke="#7a7a7a" stroke-width=".6"/><path d="M4 6.800 5.700 2.500 7.400 6.800M4.700 5.300h2" fill="none" stroke="#3b86d4" stroke-width=".9"/></svg>
<svg style="left:2434.5px;top:482.95px" width="48" height="36" viewBox="0 0 12 9"><path d="M1 .8h7.800L11 3v5.200H1z" fill="#fbfbfb" stroke="#7a7a7a" stroke-width=".8"/><path d="M8.800.8V3H11" fill="none" stroke="#7a7a7a" stroke-width=".6"/><path d="M4 6.800 5.700 2.500 7.400 6.800M4.700 5.300h2" fill="none" stroke="#3b86d4" stroke-width=".9"/></svg>
<div style="left:3259.6px;top:481.35px;width:40px;height:40px;background:#fff;border:4px solid #b9b9b9;border-radius:4px;"></div>
<div class="t" style="top:480.55px;height:40px;line-height:40px;left:4002px;transform:scaleX(0.88);transform-origin:0 50%;width:320.91px;overflow:hidden;">Transporter <i>LM</i>S Test (</div>
<div class="t" style="top:539.65px;height:40px;line-height:40px;left:79.2px;transform:scaleX(0.88);transform-origin:0 50%;width:200.45px;overflow:hidden;">20-00016</div>
<div class="t" style="top:539.65px;height:40px;line-height:40px;left:271.6px;transform:scaleX(0.88);transform-origin:0 50%;width:332.27px;overflow:hidden;">Client <i>PA</i>F Test</div>
<div class="t" style="top:539.65px;height:40px;line-height:40px;right:3649.4px;transform:scaleX(0.88);transform-origin:100% 50%;">1</div>
<div class="t" style="top:539.65px;height:40px;line-height:40px;left:667px;transform:scaleX(0.88);transform-origin:0 50%;width:85.68px;overflow:hidden;"><i>P</i>X</div>
<div class="t" style="top:539.65px;height:40px;line-height:40px;right:3416.4px;transform:scaleX(0.88);transform-origin:100% 50%;">101.00</div>
<div class="t" style="top:539.65px;height:40px;line-height:40px;right:3264px;transform:scaleX(0.88);transform-origin:100% 50%;">1.000</div>
<svg style="left:1778.8px;top:542.05px" width="48" height="36" viewBox="0 0 12 9"><path d="M1 .8h7.800L11 3v5.200H1z" fill="#fbfbfb" stroke="#7a7a7a" stroke-width=".8"/><path d="M8.800.8V3H11" fill="none" stroke="#7a7a7a" stroke-width=".6"/><path d="M4 6.800 5.700 2.500 7.400 6.800M4.700 5.300h2" fill="none" stroke="#3b86d4" stroke-width=".9"/></svg>
<svg style="left:2434.5px;top:542.05px" width="48" height="36" viewBox="0 0 12 9"><path d="M1 .8h7.800L11 3v5.200H1z" fill="#fbfbfb" stroke="#7a7a7a" stroke-width=".8"/><path d="M8.800.8V3H11" fill="none" stroke="#7a7a7a" stroke-width=".6"/><path d="M4 6.800 5.700 2.500 7.400 6.800M4.700 5.300h2" fill="none" stroke="#3b86d4" stroke-width=".9"/></svg>
<div style="left:3259.6px;top:540.45px;width:40px;height:40px;background:#fff;border:4px solid #b9b9b9;border-radius:4px;"></div>
<div class="t" style="top:539.65px;height:40px;line-height:40px;left:4002px;transform:scaleX(0.88);transform-origin:0 50%;width:320.91px;overflow:hidden;">Transporter <i>LM</i>S Test (</div>
<div class="t" style="top:598.75px;height:40px;line-height:40px;left:79.2px;transform:scaleX(0.88);transform-origin:0 50%;width:200.45px;overflow:hidden;">20-00017</div>
<div class="t" style="top:598.75px;height:40px;line-height:40px;left:271.6px;transform:scaleX(0.88);transform-origin:0 50%;width:332.27px;overflow:hidden;">Client Trading <i>LT</i>D</div>
<div class="t" style="top:598.75px;height:40px;line-height:40px;right:3649.4px;transform:scaleX(0.88);transform-origin:100% 50%;">1</div>
<div class="t" style="top:598.75px;height:40px;line-height:40px;left:667px;transform:scaleX(0.88);transform-origin:0 50%;width:85.68px;overflow:hidden;"><i>P</i>X</div>
<div class="t" style="top:598.75px;height:40px;line-height:40px;right:3416.4px;transform:scaleX(0.88);transform-origin:100% 50%;">60.00</div>
<div class="t" style="top:598.75px;height:40px;line-height:40px;right:3264px;transform:scaleX(0.88);transform-origin:100% 50%;">0.000</div>
<svg style="left:1778.8px;top:601.15px" width="48" height="36" viewBox="0 0 12 9"><path d="M1 .8h7.800L11 3v5.200H1z" fill="#fbfbfb" stroke="#7a7a7a" stroke-width=".8"/><path d="M8.800.8V3H11" fill="none" stroke="#7a7a7a" stroke-width=".6"/><path d="M4 6.800 5.700 2.500 7.400 6.800M4.700 5.300h2" fill="none" stroke="#3b86d4" stroke-width=".9"/></svg>
<svg style="left:2434.5px;top:601.15px" width="48" height="36" viewBox="0 0 12 9"><path d="M1 .8h7.800L11 3v5.200H1z" fill="#fbfbfb" stroke="#7a7a7a" stroke-width=".8"/><path d="M8.800.8V3H11" fill="none" stroke="#7a7a7a" stroke-width=".6"/><path d="M4 6.800 5.700 2.500 7.400 6.800M4.700 5.300h2" fill="none" stroke="#3b86d4" stroke-width=".9"/></svg>
<div style="left:3259.6px;top:599.55px;width:40px;height:40px;background:#fff;border:4px solid #b9b9b9;border-radius:4px;"></div>
<div class="t" style="top:598.75px;height:40px;line-height:40px;left:4002px;transform:scaleX(0.88);transform-origin:0 50%;width:320.91px;overflow:hidden;">Transporter <i>LM</i>S Test (</div>
<div class="t" style="top:657.85px;height:40px;line-height:40px;left:79.2px;transform:scaleX(0.88);transform-origin:0 50%;width:200.45px;overflow:hidden;">20-00018</div>
<div class="t" style="top:657.85px;height:40px;line-height:40px;left:271.6px;transform:scaleX(0.88);transform-origin:0 50%;width:332.27px;overflow:hidden;">Client <i>NI</i>C Test</div>
<div class="t" style="top:657.85px;height:40px;line-height:40px;right:3649.4px;transform:scaleX(0.88);transform-origin:100% 50%;">4</div>
<div class="t" style="top:657.85px;height:40px;line-height:40px;left:667px;transform:scaleX(0.88);transform-origin:0 50%;width:85.68px;overflow:hidden;"><i>P</i>X</div>
<div class="t" style="top:657.85px;height:40px;line-height:40px;right:3416.4px;transform:scaleX(0.88);transform-origin:100% 50%;">2,756.…</div>
<div class="t" style="top:657.85px;height:40px;line-height:40px;right:3264px;transform:scaleX(0.88);transform-origin:100% 50%;">8.500</div>
<svg style="left:1778.8px;top:660.25px" width="48" height="36" viewBox="0 0 12 9"><path d="M1 .8h7.800L11 3v5.200H1z" fill="#fbfbfb" stroke="#7a7a7a" stroke-width=".8"/><path d="M8.800.8V3H11" fill="none" stroke="#7a7a7a" stroke-width=".6"/><path d="M4 6.800 5.700 2.500 7.400 6.800M4.700 5.300h2" fill="none" stroke="#3b86d4" stroke-width=".9"/></svg>
<svg style="left:2434.5px;top:660.25px" width="48" height="36" viewBox="0 0 12 9"><path d="M1 .8h7.800L11 3v5.200H1z" fill="#fbfbfb" stroke="#7a7a7a" stroke-width=".8"/><path d="M8.800.8V3H11" fill="none" stroke="#7a7a7a" stroke-width=".6"/><path d="M4 6.800 5.700 2.500 7.400 6.800M4.700 5.300h2" fill="none" stroke="#3b86d4" stroke-width=".9"/></svg>
<div style="left:3259.6px;top:658.65px;width:40px;height:40px;background:#fff;border:4px solid #b9b9b9;border-radius:4px;"></div>
<div class="t" style="top:657.85px;height:40px;line-height:40px;left:4002px;transform:scaleX(0.88);transform-origin:0 50%;width:320.91px;overflow:hidden;">Transporter <i>LM</i>S Test (</div>
<div class="t" style="top:716.95px;height:40px;line-height:40px;left:79.2px;transform:scaleX(0.88);transform-origin:0 50%;width:200.45px;overflow:hidden;">20-00019</div>
<div class="t" style="top:716.95px;height:40px;line-height:40px;left:271.6px;transform:scaleX(0.88);transform-origin:0 50%;width:332.27px;overflow:hidden;">Client <i>PA</i>F Test</div>
<div class="t" style="top:716.95px;height:40px;line-height:40px;right:3649.4px;transform:scaleX(0.88);transform-origin:100% 50%;">18</div>
<div class="t" style="top:716.95px;height:40px;line-height:40px;left:667px;transform:scaleX(0.88);transform-origin:0 50%;width:85.68px;overflow:hidden;"><i>P</i>K</div>
<div class="t" style="top:716.95px;height:40px;line-height:40px;right:3416.4px;transform:scaleX(0.88);transform-origin:100% 50%;">208.00</div>
<div class="t" style="top:716.95px;height:40px;line-height:40px;right:3264px;transform:scaleX(0.88);transform-origin:100% 50%;">3.800</div>
<svg style="left:1778.8px;top:719.35px" width="48" height="36" viewBox="0 0 12 9"><path d="M1 .8h7.800L11 3v5.200H1z" fill="#fbfbfb" stroke="#7a7a7a" stroke-width=".8"/><path d="M8.800.8V3H11" fill="none" stroke="#7a7a7a" stroke-width=".6"/><path d="M4 6.800 5.700 2.500 7.400 6.800M4.700 5.300h2" fill="none" stroke="#3b86d4" stroke-width=".9"/></svg>
<svg style="left:2434.5px;top:719.35px" width="48" height="36" viewBox="0 0 12 9"><path d="M1 .8h7.800L11 3v5.200H1z" fill="#fbfbfb" stroke="#7a7a7a" stroke-width=".8"/><path d="M8.800.8V3H11" fill="none" stroke="#7a7a7a" stroke-width=".6"/><path d="M4 6.800 5.700 2.500 7.400 6.800M4.700 5.300h2" fill="none" stroke="#3b86d4" stroke-width=".9"/></svg>
<div style="left:3259.6px;top:717.75px;width:40px;height:40px;background:#fff;border:4px solid #b9b9b9;border-radius:4px;"></div>
<div class="t" style="top:716.95px;height:40px;line-height:40px;left:3671.6px;transform:scaleX(0.88);transform-origin:0 50%;width:355.45px;overflow:hidden;">Savvas Sarris</div>
<div class="t" style="top:716.95px;height:40px;line-height:40px;left:4002px;transform:scaleX(0.88);transform-origin:0 50%;width:320.91px;overflow:hidden;">Transporter <i>LM</i>S Test (</div>
<div class="t" style="top:776.05px;height:40px;line-height:40px;left:79.2px;transform:scaleX(0.88);transform-origin:0 50%;width:200.45px;overflow:hidden;">20-00021</div>
<div class="t" style="top:776.05px;height:40px;line-height:40px;left:271.6px;transform:scaleX(0.88);transform-origin:0 50%;width:332.27px;overflow:hidden;">Client <i>LC</i>A Test</div>
<div class="t" style="top:776.05px;height:40px;line-height:40px;right:3649.4px;transform:scaleX(0.88);transform-origin:100% 50%;">7</div>
<div class="t" style="top:776.05px;height:40px;line-height:40px;left:667px;transform:scaleX(0.88);transform-origin:0 50%;width:85.68px;overflow:hidden;"><i>P</i>X</div>
<div class="t" style="top:776.05px;height:40px;line-height:40px;right:3416.4px;transform:scaleX(0.88);transform-origin:100% 50%;">1,514.…</div>
<div class="t" style="top:776.05px;height:40px;line-height:40px;right:3264px;transform:scaleX(0.88);transform-origin:100% 50%;">9.000</div>
<svg style="left:1778.8px;top:778.45px" width="48" height="36" viewBox="0 0 12 9"><path d="M1 .8h7.800L11 3v5.200H1z" fill="#fbfbfb" stroke="#7a7a7a" stroke-width=".8"/><path d="M8.800.8V3H11" fill="none" stroke="#7a7a7a" stroke-width=".6"/><path d="M4 6.800 5.700 2.500 7.400 6.800M4.700 5.300h2" fill="none" stroke="#3b86d4" stroke-width=".9"/></svg>
<svg style="left:2434.5px;top:778.45px" width="48" height="36" viewBox="0 0 12 9"><path d="M1 .8h7.800L11 3v5.200H1z" fill="#fbfbfb" stroke="#7a7a7a" stroke-width=".8"/><path d="M8.800.8V3H11" fill="none" stroke="#7a7a7a" stroke-width=".6"/><path d="M4 6.800 5.700 2.500 7.400 6.800M4.700 5.300h2" fill="none" stroke="#3b86d4" stroke-width=".9"/></svg>
<div style="left:3259.6px;top:776.85px;width:40px;height:40px;background:#fff;border:4px solid #b9b9b9;border-radius:4px;"></div>
<div class="t" style="top:776.05px;height:40px;line-height:40px;left:3671.6px;transform:scaleX(0.88);transform-origin:0 50%;width:355.45px;overflow:hidden;">Savvas Sarris</div>
<div class="t" style="top:776.05px;height:40px;line-height:40px;left:4002px;transform:scaleX(0.88);transform-origin:0 50%;width:320.91px;overflow:hidden;">Transporter <i>LM</i>S Test (</div>
<div class="t" style="top:835.15px;height:40px;line-height:40px;left:79.2px;transform:scaleX(0.88);transform-origin:0 50%;width:200.45px;overflow:hidden;">20-00023</div>
<div class="t" style="top:835.15px;height:40px;line-height:40px;left:271.6px;transform:scaleX(0.88);transform-origin:0 50%;width:332.27px;overflow:hidden;">Panayiota Zachariad…</div>
<div class="t" style="top:835.15px;height:40px;line-height:40px;right:3649.4px;transform:scaleX(0.88);transform-origin:100% 50%;">10</div>
<div class="t" style="top:835.15px;height:40px;line-height:40px;left:667px;transform:scaleX(0.88);transform-origin:0 50%;width:85.68px;overflow:hidden;"><i>B</i>X</div>
<div class="t" style="top:835.15px;height:40px;line-height:40px;right:3416.4px;transform:scaleX(0.88);transform-origin:100% 50%;">50.00</div>
<div class="t" style="top:835.15px;height:40px;line-height:40px;right:3264px;transform:scaleX(0.88);transform-origin:100% 50%;">0.000</div>
<svg style="left:1778.8px;top:837.55px" width="48" height="36" viewBox="0 0 12 9"><path d="M1 .8h7.800L11 3v5.200H1z" fill="#fbfbfb" stroke="#7a7a7a" stroke-width=".8"/><path d="M8.800.8V3H11" fill="none" stroke="#7a7a7a" stroke-width=".6"/><path d="M4 6.800 5.700 2.500 7.400 6.800M4.700 5.300h2" fill="none" stroke="#3b86d4" stroke-width=".9"/></svg>
<svg style="left:2434.5px;top:837.55px" width="48" height="36" viewBox="0 0 12 9"><path d="M1 .8h7.800L11 3v5.200H1z" fill="#fbfbfb" stroke="#7a7a7a" stroke-width=".8"/><path d="M8.800.8V3H11" fill="none" stroke="#7a7a7a" stroke-width=".6"/><path d="M4 6.800 5.700 2.500 7.400 6.800M4.700 5.300h2" fill="none" stroke="#3b86d4" stroke-width=".9"/></svg>
<div style="left:3259.6px;top:835.95px;width:40px;height:40px;background:#fff;border:4px solid #b9b9b9;border-radius:4px;"></div>
<div class="t" style="top:835.15px;height:40px;line-height:40px;left:4002px;transform:scaleX(0.88);transform-origin:0 50%;width:320.91px;overflow:hidden;">Transporter <i>LM</i>S Test (</div>
<div class="t" style="top:894.25px;height:40px;line-height:40px;left:79.2px;transform:scaleX(0.88);transform-origin:0 50%;width:200.45px;overflow:hidden;">21-00001</div>
<div class="t" style="top:894.25px;height:40px;line-height:40px;left:271.6px;transform:scaleX(0.88);transform-origin:0 50%;width:332.27px;overflow:hidden;">George Client&nbsp; <i>LT</i>D</div>
<div class="t" style="top:894.25px;height:40px;line-height:40px;right:3649.4px;transform:scaleX(0.88);transform-origin:100% 50%;">1</div>
<div class="t" style="top:894.25px;height:40px;line-height:40px;left:667px;transform:scaleX(0.88);transform-origin:0 50%;width:85.68px;overflow:hidden;"><i>N</i>A1</div>
<div class="t" style="top:894.25px;height:40px;line-height:40px;right:3416.4px;transform:scaleX(0.88);transform-origin:100% 50%;">258.00</div>
<div class="t" style="top:894.25px;height:40px;line-height:40px;right:3264px;transform:scaleX(0.88);transform-origin:100% 50%;">20.000</div>
<svg style="left:1778.8px;top:896.65px" width="48" height="36" viewBox="0 0 12 9"><path d="M1 .8h7.800L11 3v5.200H1z" fill="#fbfbfb" stroke="#7a7a7a" stroke-width=".8"/><path d="M8.800.8V3H11" fill="none" stroke="#7a7a7a" stroke-width=".6"/><path d="M4 6.800 5.700 2.500 7.400 6.800M4.700 5.300h2" fill="none" stroke="#3b86d4" stroke-width=".9"/></svg>
<svg style="left:2434.5px;top:896.65px" width="48" height="36" viewBox="0 0 12 9"><path d="M1 .8h7.800L11 3v5.200H1z" fill="#fbfbfb" stroke="#7a7a7a" stroke-width=".8"/><path d="M8.800.8V3H11" fill="none" stroke="#7a7a7a" stroke-width=".6"/><path d="M4 6.800 5.700 2.500 7.400 6.800M4.700 5.300h2" fill="none" stroke="#3b86d4" stroke-width=".9"/></svg>
<div style="left:3259.6px;top:895.05px;width:40px;height:40px;background:#fff;border:4px solid #b9b9b9;border-radius:4px;"></div>
<div class="t" style="top:894.25px;height:40px;line-height:40px;left:4002px;transform:scaleX(0.88);transform-origin:0 50%;width:320.91px;overflow:hidden;">Transporter <i>LM</i>S Test (</div>
<div class="t" style="top:953.35px;height:40px;line-height:40px;left:79.2px;transform:scaleX(0.88);transform-origin:0 50%;width:200.45px;overflow:hidden;">21-00002</div>
<div class="t" style="top:953.35px;height:40px;line-height:40px;left:271.6px;transform:scaleX(0.88);transform-origin:0 50%;width:332.27px;overflow:hidden;">Andreas Clients Ltd</div>
<div class="t" style="top:953.35px;height:40px;line-height:40px;right:3649.4px;transform:scaleX(0.88);transform-origin:100% 50%;">2</div>
<div class="t" style="top:953.35px;height:40px;line-height:40px;left:667px;transform:scaleX(0.88);transform-origin:0 50%;width:85.68px;overflow:hidden;"><i>P</i>X</div>
<div class="t" style="top:953.35px;height:40px;line-height:40px;right:3416.4px;transform:scaleX(0.88);transform-origin:100% 50%;">600.00</div>
<div class="t" style="top:953.35px;height:40px;line-height:40px;right:3264px;transform:scaleX(0.88);transform-origin:100% 50%;">3.600</div>
<svg style="left:1778.8px;top:955.75px" width="48" height="36" viewBox="0 0 12 9"><path d="M1 .8h7.800L11 3v5.200H1z" fill="#fbfbfb" stroke="#7a7a7a" stroke-width=".8"/><path d="M8.800.8V3H11" fill="none" stroke="#7a7a7a" stroke-width=".6"/><path d="M4 6.800 5.700 2.500 7.400 6.800M4.700 5.300h2" fill="none" stroke="#3b86d4" stroke-width=".9"/></svg>
<svg style="left:2434.5px;top:955.75px" width="48" height="36" viewBox="0 0 12 9"><path d="M1 .8h7.800L11 3v5.200H1z" fill="#fbfbfb" stroke="#7a7a7a" stroke-width=".8"/><path d="M8.800.8V3H11" fill="none" stroke="#7a7a7a" stroke-width=".6"/><path d="M4 6.800 5.700 2.500 7.400 6.800M4.700 5.300h2" fill="none" stroke="#3b86d4" stroke-width=".9"/></svg>
<div style="left:3259.6px;top:954.15px;width:40px;height:40px;background:#fff;border:4px solid #b9b9b9;border-radius:4px;"></div>
<div class="t" style="top:953.35px;height:40px;line-height:40px;left:4002px;transform:scaleX(0.88);transform-origin:0 50%;width:320.91px;overflow:hidden;">Transporter <i>LM</i>S Test (</div>
<div class="t" style="top:1012.45px;height:40px;line-height:40px;left:79.2px;transform:scaleX(0.88);transform-origin:0 50%;width:200.45px;overflow:hidden;">21-00003</div>
<div class="t" style="top:1012.45px;height:40px;line-height:40px;left:271.6px;transform:scaleX(0.88);transform-origin:0 50%;width:332.27px;overflow:hidden;">Client Test <i>LIMASS</i>O…</div>
<div class="t" style="top:1012.45px;height:40px;line-height:40px;right:3649.4px;transform:scaleX(0.88);transform-origin:100% 50%;">1</div>
<div class="t" style="top:1012.45px;height:40px;line-height:40px;left:667px;transform:scaleX(0.88);transform-origin:0 50%;width:85.68px;overflow:hidden;"><i>N</i>A1</div>
<div class="t" style="top:1012.45px;height:40px;line-height:40px;right:3416.4px;transform:scaleX(0.88);transform-origin:100% 50%;">2,540.…</div>
<div class="t" style="top:1012.45px;height:40px;line-height:40px;right:3264px;transform:scaleX(0.88);transform-origin:100% 50%;">15.000</div>
<svg style="left:1778.8px;top:1014.85px" width="48" height="36" viewBox="0 0 12 9"><path d="M1 .8h7.800L11 3v5.200H1z" fill="#fbfbfb" stroke="#7a7a7a" stroke-width=".8"/><path d="M8.800.8V3H11" fill="none" stroke="#7a7a7a" stroke-width=".6"/><path d="M4 6.800 5.700 2.500 7.400 6.800M4.700 5.300h2" fill="none" stroke="#3b86d4" stroke-width=".9"/></svg>
<svg style="left:2434.5px;top:1014.85px" width="48" height="36" viewBox="0 0 12 9"><path d="M1 .8h7.800L11 3v5.200H1z" fill="#fbfbfb" stroke="#7a7a7a" stroke-width=".8"/><path d="M8.800.8V3H11" fill="none" stroke="#7a7a7a" stroke-width=".6"/><path d="M4 6.800 5.700 2.500 7.400 6.800M4.700 5.300h2" fill="none" stroke="#3b86d4" stroke-width=".9"/></svg>
<div style="left:3259.6px;top:1013.25px;width:40px;height:40px;background:#fff;border:4px solid #b9b9b9;border-radius:4px;"></div>
<div class="t" style="top:1012.45px;height:40px;line-height:40px;left:4002px;transform:scaleX(0.88);transform-origin:0 50%;width:320.91px;overflow:hidden;">Transporter <i>LM</i>S Test (</div>
<div class="t" style="top:1071.55px;height:40px;line-height:40px;left:79.2px;transform:scaleX(0.88);transform-origin:0 50%;width:200.45px;overflow:hidden;">21-00005</div>
<div class="t" style="top:1071.55px;height:40px;line-height:40px;left:271.6px;transform:scaleX(0.88);transform-origin:0 50%;width:332.27px;overflow:hidden;">Client <i>NI</i>C Test</div>
<div class="t" style="top:1071.55px;height:40px;line-height:40px;right:3649.4px;transform:scaleX(0.88);transform-origin:100% 50%;">4</div>
<div class="t" style="top:1071.55px;height:40px;line-height:40px;left:667px;transform:scaleX(0.88);transform-origin:0 50%;width:85.68px;overflow:hidden;"><i>B</i>A</div>
<div class="t" style="top:1071.55px;height:40px;line-height:40px;right:3416.4px;transform:scaleX(0.88);transform-origin:100% 50%;">456.00</div>
<div class="t" style="top:1071.55px;height:40px;line-height:40px;right:3264px;transform:scaleX(0.88);transform-origin:100% 50%;">0.000</div>
<svg style="left:1778.8px;top:1073.95px" width="48" height="36" viewBox="0 0 12 9"><path d="M1 .8h7.800L11 3v5.200H1z" fill="#fbfbfb" stroke="#7a7a7a" stroke-width=".8"/><path d="M8.800.8V3H11" fill="none" stroke="#7a7a7a" stroke-width=".6"/><path d="M4 6.800 5.700 2.500 7.400 6.800M4.700 5.300h2" fill="none" stroke="#3b86d4" stroke-width=".9"/></svg>
<svg style="left:2434.5px;top:1073.95px" width="48" height="36" viewBox="0 0 12 9"><path d="M1 .8h7.800L11 3v5.200H1z" fill="#fbfbfb" stroke="#7a7a7a" stroke-width=".8"/><path d="M8.800.8V3H11" fill="none" stroke="#7a7a7a" stroke-width=".6"/><path d="M4 6.800 5.700 2.500 7.400 6.800M4.700 5.300h2" fill="none" stroke="#3b86d4" stroke-width=".9"/></svg>
<div style="left:3259.6px;top:1072.35px;width:40px;height:40px;background:#fff;border:4px solid #b9b9b9;border-radius:4px;"></div>
<div class="t" style="top:1071.55px;height:40px;line-height:40px;left:3671.6px;transform:scaleX(0.88);transform-origin:0 50%;width:355.45px;overflow:hidden;">Savvas Sarris</div>
<div class="t" style="top:1071.55px;height:40px;line-height:40px;left:4002px;transform:scaleX(0.88);transform-origin:0 50%;width:320.91px;overflow:hidden;">Transporter <i>LM</i>S Test (</div>
<div class="t" style="top:1130.65px;height:40px;line-height:40px;left:79.2px;transform:scaleX(0.88);transform-origin:0 50%;width:200.45px;overflow:hidden;">21-00006</div>
<div class="t" style="top:1130.65px;height:40px;line-height:40px;left:271.6px;transform:scaleX(0.88);transform-origin:0 50%;width:332.27px;overflow:hidden;">andreas saa</div>
<div class="t" style="top:1130.65px;height:40px;line-height:40px;right:3649.4px;transform:scaleX(0.88);transform-origin:100% 50%;">4</div>
<div class="t" style="top:1130.65px;height:40px;line-height:40px;left:667px;transform:scaleX(0.88);transform-origin:0 50%;width:85.68px;overflow:hidden;"><i>B</i>A</div>
<div class="t" style="top:1130.65px;height:40px;line-height:40px;right:3416.4px;transform:scaleX(0.88);transform-origin:100% 50%;">456.00</div>
<div class="t" style="top:1130.65px;height:40px;line-height:40px;right:3264px;transform:scaleX(0.88);transform-origin:100% 50%;">0.000</div>
<svg style="left:1778.8px;top:1133.05px" width="48" height="36" viewBox="0 0 12 9"><path d="M1 .8h7.800L11 3v5.200H1z" fill="#fbfbfb" stroke="#7a7a7a" stroke-width=".8"/><path d="M8.800.8V3H11" fill="none" stroke="#7a7a7a" stroke-width=".6"/><path d="M4 6.800 5.700 2.500 7.400 6.800M4.700 5.300h2" fill="none" stroke="#3b86d4" stroke-width=".9"/></svg>
<svg style="left:2434.5px;top:1133.05px" width="48" height="36" viewBox="0 0 12 9"><path d="M1 .8h7.800L11 3v5.200H1z" fill="#fbfbfb" stroke="#7a7a7a" stroke-width=".8"/><path d="M8.800.8V3H11" fill="none" stroke="#7a7a7a" stroke-width=".6"/><path d="M4 6.800 5.700 2.500 7.400 6.800M4.700 5.300h2" fill="none" stroke="#3b86d4" stroke-width=".9"/></svg>
<div style="left:3259.6px;top:1131.45px;width:40px;height:40px;background:#fff;border:4px solid #b9b9b9;border-radius:4px;"></div>
<div class="t" style="top:1130.65px;height:40px;line-height:40px;left:4002px;transform:scaleX(0.88);transform-origin:0 50%;width:320.91px;overflow:hidden;">Transporter <i>LM</i>S Test (</div>
<div class="t" style="top:1189.75px;height:40px;line-height:40px;left:79.2px;transform:scaleX(0.88);transform-origin:0 50%;width:200.45px;overflow:hidden;">22-00001</div>
<div class="t" style="top:1189.75px;height:40px;line-height:40px;left:271.6px;transform:scaleX(0.88);transform-origin:0 50%;width:332.27px;overflow:hidden;">Andreas Clients Ltd</div>
<div class="t" style="top:1189.75px;height:40px;line-height:40px;right:3649.4px;transform:scaleX(0.88);transform-origin:100% 50%;">2</div>
<div class="t" style="top:1189.75px;height:40px;line-height:40px;right:3416.4px;transform:scaleX(0.88);transform-origin:100% 50%;">0.00</div>
<div class="t" style="top:1189.75px;height:40px;line-height:40px;right:3264px;transform:scaleX(0.88);transform-origin:100% 50%;">0.000</div>
<svg style="left:1778.8px;top:1192.15px" width="48" height="36" viewBox="0 0 12 9"><path d="M1 .8h7.800L11 3v5.200H1z" fill="#fbfbfb" stroke="#7a7a7a" stroke-width=".8"/><path d="M8.800.8V3H11" fill="none" stroke="#7a7a7a" stroke-width=".6"/><path d="M4 6.800 5.700 2.500 7.400 6.800M4.700 5.300h2" fill="none" stroke="#3b86d4" stroke-width=".9"/></svg>
<svg style="left:2434.5px;top:1192.15px" width="48" height="36" viewBox="0 0 12 9"><path d="M1 .8h7.800L11 3v5.200H1z" fill="#fbfbfb" stroke="#7a7a7a" stroke-width=".8"/><path d="M8.800.8V3H11" fill="none" stroke="#7a7a7a" stroke-width=".6"/><path d="M4 6.800 5.700 2.500 7.400 6.800M4.700 5.300h2" fill="none" stroke="#3b86d4" stroke-width=".9"/></svg>
<div style="left:3259.6px;top:1190.55px;width:40px;height:40px;background:#fff;border:4px solid #b9b9b9;border-radius:4px;"></div>
<div class="t" style="top:1189.75px;height:40px;line-height:40px;left:4002px;transform:scaleX(0.88);transform-origin:0 50%;width:320.91px;overflow:hidden;">Transporter <i>LM</i>S Test (</div>
<div class="t" style="top:1248.85px;height:40px;line-height:40px;left:79.2px;transform:scaleX(0.88);transform-origin:0 50%;width:200.45px;overflow:hidden;">22-00002</div>
<div class="t" style="top:1248.85px;height:40px;line-height:40px;left:271.6px;transform:scaleX(0.88);transform-origin:0 50%;width:332.27px;overflow:hidden;">Client <i>ANK</i>E Test ltd</div>
<div class="t" style="top:1248.85px;height:40px;line-height:40px;right:3649.4px;transform:scaleX(0.88);transform-origin:100% 50%;">20</div>
<div class="t" style="top:1248.85px;height:40px;line-height:40px;left:667px;transform:scaleX(0.88);transform-origin:0 50%;width:85.68px;overflow:hidden;"><i>P</i>K</div>
<div class="t" style="top:1248.85px;height:40px;line-height:40px;right:3416.4px;transform:scaleX(0.88);transform-origin:100% 50%;">2,589.…</div>
<div class="t" style="top:1248.85px;height:40px;line-height:40px;right:3264px;transform:scaleX(0.88);transform-origin:100% 50%;">25.000</div>
<svg style="left:1778.8px;top:1251.25px" width="48" height="36" viewBox="0 0 12 9"><path d="M1 .8h7.800L11 3v5.200H1z" fill="#fbfbfb" stroke="#7a7a7a" stroke-width=".8"/><path d="M8.800.8V3H11" fill="none" stroke="#7a7a7a" stroke-width=".6"/><path d="M4 6.800 5.700 2.500 7.400 6.800M4.700 5.300h2" fill="none" stroke="#3b86d4" stroke-width=".9"/></svg>
<svg style="left:2434.5px;top:1251.25px" width="48" height="36" viewBox="0 0 12 9"><path d="M1 .8h7.800L11 3v5.200H1z" fill="#fbfbfb" stroke="#7a7a7a" stroke-width=".8"/><path d="M8.800.8V3H11" fill="none" stroke="#7a7a7a" stroke-width=".6"/><path d="M4 6.800 5.700 2.500 7.400 6.800M4.700 5.300h2" fill="none" stroke="#3b86d4" stroke-width=".9"/></svg>
<div style="left:3259.6px;top:1249.65px;width:40px;height:40px;background:#fff;border:4px solid #b9b9b9;border-radius:4px;"></div>
<div class="t" style="top:1248.85px;height:40px;line-height:40px;left:3671.6px;transform:scaleX(0.88);transform-origin:0 50%;width:355.45px;overflow:hidden;">Savvas Sarris</div>
<div class="t" style="top:1248.85px;height:40px;line-height:40px;left:4002px;transform:scaleX(0.88);transform-origin:0 50%;width:320.91px;overflow:hidden;">Transporter <i>LM</i>S Test (</div>
<div class="t" style="top:1307.95px;height:40px;line-height:40px;left:79.2px;transform:scaleX(0.88);transform-origin:0 50%;width:200.45px;overflow:hidden;">22-00003</div>
<div class="t" style="top:1307.95px;height:40px;line-height:40px;left:271.6px;transform:scaleX(0.88);transform-origin:0 50%;width:332.27px;overflow:hidden;">Client <i>ANK</i>E Test ltd</div>
<div class="t" style="top:1307.95px;height:40px;line-height:40px;right:3649.4px;transform:scaleX(0.88);transform-origin:100% 50%;">13</div>
<div class="t" style="top:1307.95px;height:40px;line-height:40px;left:667px;transform:scaleX(0.88);transform-origin:0 50%;width:85.68px;overflow:hidden;"><i>P</i>K</div>
<div class="t" style="top:1307.95px;height:40px;line-height:40px;right:3416.4px;transform:scaleX(0.88);transform-origin:100% 50%;">1,258.…</div>
<div class="t" style="top:1307.95px;height:40px;line-height:40px;right:3264px;transform:scaleX(0.88);transform-origin:100% 50%;">15.000</div>
<svg style="left:1778.8px;top:1310.35px" width="48" height="36" viewBox="0 0 12 9"><path d="M1 .8h7.800L11 3v5.200H1z" fill="#fbfbfb" stroke="#7a7a7a" stroke-width=".8"/><path d="M8.800.8V3H11" fill="none" stroke="#7a7a7a" stroke-width=".6"/><path d="M4 6.800 5.700 2.500 7.400 6.800M4.700 5.300h2" fill="none" stroke="#3b86d4" stroke-width=".9"/></svg>
<svg style="left:2434.5px;top:1310.35px" width="48" height="36" viewBox="0 0 12 9"><path d="M1 .8h7.800L11 3v5.200H1z" fill="#fbfbfb" stroke="#7a7a7a" stroke-width=".8"/><path d="M8.800.8V3H11" fill="none" stroke="#7a7a7a" stroke-width=".6"/><path d="M4 6.800 5.700 2.500 7.400 6.800M4.700 5.300h2" fill="none" stroke="#3b86d4" stroke-width=".9"/></svg>
<div style="left:3259.6px;top:1308.75px;width:40px;height:40px;background:#fff;border:4px solid #b9b9b9;border-radius:4px;"></div>
<div class="t" style="top:1307.95px;height:40px;line-height:40px;left:3671.6px;transform:scaleX(0.88);transform-origin:0 50%;width:355.45px;overflow:hidden;">Savvas Sarris</div>
<div class="t" style="top:1307.95px;height:40px;line-height:40px;left:4002px;transform:scaleX(0.88);transform-origin:0 50%;width:320.91px;overflow:hidden;">Transporter <i>LM</i>S Test (</div>
<div class="t" style="top:1367.05px;height:40px;line-height:40px;left:79.2px;transform:scaleX(0.88);transform-origin:0 50%;width:200.45px;overflow:hidden;">22-00004</div>
<div class="t" style="top:1367.05px;height:40px;line-height:40px;left:271.6px;transform:scaleX(0.88);transform-origin:0 50%;width:332.27px;overflow:hidden;">Andreas Clients Ltd</div>
<div class="t" style="top:1367.05px;height:40px;line-height:40px;right:3649.4px;transform:scaleX(0.88);transform-origin:100% 50%;">3</div>
<div class="t" style="top:1367.05px;height:40px;line-height:40px;left:667px;transform:scaleX(0.88);transform-origin:0 50%;width:85.68px;overflow:hidden;"><i>A</i>J</div>
<div class="t" style="top:1367.05px;height:40px;line-height:40px;right:3416.4px;transform:scaleX(0.88);transform-origin:100% 50%;">292.00</div>
<div class="t" style="top:1367.05px;height:40px;line-height:40px;right:3264px;transform:scaleX(0.88);transform-origin:100% 50%;">12.000</div>
<svg style="left:1778.8px;top:1369.45px" width="48" height="36" viewBox="0 0 12 9"><path d="M1 .8h7.800L11 3v5.200H1z" fill="#fbfbfb" stroke="#7a7a7a" stroke-width=".8"/><path d="M8.800.8V3H11" fill="none" stroke="#7a7a7a" stroke-width=".6"/><path d="M4 6.800 5.700 2.500 7.400 6.800M4.700 5.300h2" fill="none" stroke="#3b86d4" stroke-width=".9"/></svg>
<svg style="left:2434.5px;top:1369.45px" width="48" height="36" viewBox="0 0 12 9"><path d="M1 .8h7.800L11 3v5.200H1z" fill="#fbfbfb" stroke="#7a7a7a" stroke-width=".8"/><path d="M8.800.8V3H11" fill="none" stroke="#7a7a7a" stroke-width=".6"/><path d="M4 6.800 5.700 2.500 7.400 6.800M4.700 5.300h2" fill="none" stroke="#3b86d4" stroke-width=".9"/></svg>
<div style="left:3259.6px;top:1367.85px;width:40px;height:40px;background:#fff;border:4px solid #b9b9b9;border-radius:4px;"></div>
<div class="t" style="top:1367.05px;height:40px;line-height:40px;left:3671.6px;transform:scaleX(0.88);transform-origin:0 50%;width:355.45px;overflow:hidden;">Costas Constantinou</div>
<div class="t" style="top:1426.15px;height:40px;line-height:40px;left:79.2px;transform:scaleX(0.88);transform-origin:0 50%;width:200.45px;overflow:hidden;">22-00005</div>
<div class="t" style="top:1426.15px;height:40px;line-height:40px;left:271.6px;transform:scaleX(0.88);transform-origin:0 50%;width:332.27px;overflow:hidden;">Andreas Clients Ltd</div>
<div class="t" style="top:1426.15px;height:40px;line-height:40px;right:3649.4px;transform:scaleX(0.88);transform-origin:100% 50%;">1</div>
<div class="t" style="top:1426.15px;height:40px;line-height:40px;left:667px;transform:scaleX(0.88);transform-origin:0 50%;width:85.68px;overflow:hidden;"><i>A</i>N</div>
<div class="t" style="top:1426.15px;height:40px;line-height:40px;right:3416.4px;transform:scaleX(0.88);transform-origin:100% 50%;">222.00</div>
<div class="t" style="top:1426.15px;height:40px;line-height:40px;right:3264px;transform:scaleX(0.88);transform-origin:100% 50%;">1.000</div>
<svg style="left:1778.8px;top:1428.55px" width="48" height="36" viewBox="0 0 12 9"><path d="M1 .8h7.800L11 3v5.200H1z" fill="#fbfbfb" stroke="#7a7a7a" stroke-width=".8"/><path d="M8.800.8V3H11" fill="none" stroke="#7a7a7a" stroke-width=".6"/><path d="M4 6.800 5.700 2.500 7.400 6.800M4.700 5.300h2" fill="none" stroke="#3b86d4" stroke-width=".9"/></svg>
<svg style="left:2434.5px;top:1428.55px" width="48" height="36" viewBox="0 0 12 9"><path d="M1 .8h7.800L11 3v5.200H1z" fill="#fbfbfb" stroke="#7a7a7a" stroke-width=".8"/><path d="M8.800.8V3H11" fill="none" stroke="#7a7a7a" stroke-width=".6"/><path d="M4 6.800 5.700 2.500 7.400 6.800M4.700 5.300h2" fill="none" stroke="#3b86d4" stroke-width=".9"/></svg>
<div style="left:3259.6px;top:1426.95px;width:40px;height:40px;background:#fff;border:4px solid #b9b9b9;border-radius:4px;"></div>
<div class="t" style="top:1426.15px;height:40px;line-height:40px;left:4002px;transform:scaleX(0.88);transform-origin:0 50%;width:320.91px;overflow:hidden;">Transporter <i>LM</i>S Test (</div>
<div class="t" style="top:1485.25px;height:40px;line-height:40px;left:79.2px;transform:scaleX(0.88);transform-origin:0 50%;width:200.45px;overflow:hidden;">22-00006</div>
<div class="t" style="top:1485.25px;height:40px;line-height:40px;left:271.6px;transform:scaleX(0.88);transform-origin:0 50%;width:332.27px;overflow:hidden;">Andreas Clients Ltd</div>
<div class="t" style="top:1485.25px;height:40px;line-height:40px;right:3649.4px;transform:scaleX(0.88);transform-origin:100% 50%;">2</div>
<div class="t" style="top:1485.25px;height:40px;line-height:40px;left:667px;transform:scaleX(0.88);transform-origin:0 50%;width:85.68px;overflow:hidden;"><i>P</i>X</div>
<div class="t" style="top:1485.25px;height:40px;line-height:40px;right:3416.4px;transform:scaleX(0.88);transform-origin:100% 50%;">145.00</div>
<div class="t" style="top:1485.25px;height:40px;line-height:40px;right:3264px;transform:scaleX(0.88);transform-origin:100% 50%;">2.000</div>
<svg style="left:1778.8px;top:1487.65px" width="48" height="36" viewBox="0 0 12 9"><path d="M1 .8h7.800L11 3v5.200H1z" fill="#fbfbfb" stroke="#7a7a7a" stroke-width=".8"/><path d="M8.800.8V3H11" fill="none" stroke="#7a7a7a" stroke-width=".6"/><path d="M4 6.800 5.700 2.500 7.400 6.800M4.700 5.300h2" fill="none" stroke="#3b86d4" stroke-width=".9"/></svg>
<svg style="left:2434.5px;top:1487.65px" width="48" height="36" viewBox="0 0 12 9"><path d="M1 .8h7.800L11 3v5.200H1z" fill="#fbfbfb" stroke="#7a7a7a" stroke-width=".8"/><path d="M8.800.8V3H11" fill="none" stroke="#7a7a7a" stroke-width=".6"/><path d="M4 6.800 5.700 2.500 7.400 6.800M4.700 5.300h2" fill="none" stroke="#3b86d4" stroke-width=".9"/></svg>
<div style="left:3259.6px;top:1486.05px;width:40px;height:40px;background:#fff;border:4px solid #b9b9b9;border-radius:4px;"></div>
<div class="t" style="top:1485.25px;height:40px;line-height:40px;left:4002px;transform:scaleX(0.88);transform-origin:0 50%;width:320.91px;overflow:hidden;">Transporter <i>LM</i>S Test (</div>
<div class="t" style="top:1544.35px;height:40px;line-height:40px;left:79.2px;transform:scaleX(0.88);transform-origin:0 50%;width:200.45px;overflow:hidden;">22-00007</div>
<div class="t" style="top:1544.35px;height:40px;line-height:40px;left:271.6px;transform:scaleX(0.88);transform-origin:0 50%;width:332.27px;overflow:hidden;">Client Marios Lms Ltd .</div>
<div class="t" style="top:1544.35px;height:40px;line-height:40px;right:3649.4px;transform:scaleX(0.88);transform-origin:100% 50%;">2</div>
<div class="t" style="top:1544.35px;height:40px;line-height:40px;left:667px;transform:scaleX(0.88);transform-origin:0 50%;width:85.68px;overflow:hidden;"><i>P</i>X</div>
<div class="t" style="top:1544.35px;height:40px;line-height:40px;right:3416.4px;transform:scaleX(0.88);transform-origin:100% 50%;">1,600.…</div>
<div class="t" style="top:1544.35px;height:40px;line-height:40px;right:3264px;transform:scaleX(0.88);transform-origin:100% 50%;">5.000</div>
<svg style="left:1778.8px;top:1546.75px" width="48" height="36" viewBox="0 0 12 9"><path d="M1 .8h7.800L11 3v5.200H1z" fill="#fbfbfb" stroke="#7a7a7a" stroke-width=".8"/><path d="M8.800.8V3H11" fill="none" stroke="#7a7a7a" stroke-width=".6"/><path d="M4 6.800 5.700 2.500 7.400 6.800M4.700 5.300h2" fill="none" stroke="#3b86d4" stroke-width=".9"/></svg>
<svg style="left:2434.5px;top:1546.75px" width="48" height="36" viewBox="0 0 12 9"><path d="M1 .8h7.800L11 3v5.200H1z" fill="#fbfbfb" stroke="#7a7a7a" stroke-width=".8"/><path d="M8.800.8V3H11" fill="none" stroke="#7a7a7a" stroke-width=".6"/><path d="M4 6.800 5.700 2.500 7.400 6.800M4.700 5.300h2" fill="none" stroke="#3b86d4" stroke-width=".9"/></svg>
<div style="left:3259.6px;top:1545.15px;width:40px;height:40px;background:#fff;border:4px solid #b9b9b9;border-radius:4px;"></div>
<div class="t" style="top:1544.35px;height:40px;line-height:40px;left:4002px;transform:scaleX(0.88);transform-origin:0 50%;width:320.91px;overflow:hidden;">Transporter <i>LM</i>S Test (</div>
<div style="left:60px;top:0px;width:4px;height:1580.8px;background:#dcdcdc;"></div>
<div style="left:254px;top:0px;width:4px;height:1580.8px;background:#d0d0d0;"></div>
<div style="left:564px;top:0px;width:4px;height:1580.8px;background:#d0d0d0;"></div>
<div style="left:651px;top:0px;width:4px;height:1580.8px;background:#d0d0d0;"></div>
<div style="left:744px;top:0px;width:4px;height:1580.8px;background:#d0d0d0;"></div>
<div style="left:884px;top:0px;width:4px;height:1580.8px;background:#d0d0d0;"></div>
<div style="left:1036.4px;top:0px;width:4px;height:1580.8px;background:#d0d0d0;"></div>
<div style="left:1271.2px;top:0px;width:4px;height:1580.8px;background:#dcdcdc;"></div>
<div style="left:1515px;top:0px;width:4px;height:1580.8px;background:#dcdcdc;"></div>
<div style="left:1671.2px;top:0px;width:4px;height:1580.8px;background:#dcdcdc;"></div>
<div style="left:1928px;top:0px;width:4px;height:1580.8px;background:#dcdcdc;"></div>
<div style="left:2171.6px;top:0px;width:4px;height:1580.8px;background:#dcdcdc;"></div>
<div style="left:2327.6px;top:0px;width:4px;height:1580.8px;background:#dcdcdc;"></div>
<div style="left:2583px;top:0px;width:4px;height:1580.8px;background:#dcdcdc;"></div>
<div style="left:2790.8px;top:0px;width:4px;height:1580.8px;background:#dcdcdc;"></div>
<div style="left:2983.6px;top:0px;width:4px;height:1580.8px;background:#dcdcdc;"></div>
<div style="left:3175.6px;top:0px;width:4px;height:1580.8px;background:#dcdcdc;"></div>
<div style="left:3375.6px;top:0px;width:4px;height:1580.8px;background:#dcdcdc;"></div>
<div style="left:3547.2px;top:0px;width:4px;height:1580.8px;background:#dcdcdc;"></div>
<div style="left:3655.6px;top:0px;width:4px;height:1580.8px;background:#dcdcdc;"></div>
<div style="left:3986px;top:0px;width:4px;height:1580.8px;background:#dcdcdc;"></div>
<div style="left:60px;top:0px;width:4px;height:1580.8px;background:#d0d0d0;"></div>
</div>
<div style="left:708px;top:2193.2px;width:4288px;height:74.8px;background:#fff;"></div>
<div style="left:708px;top:2192px;width:4288px;height:2.8px;background:#d6d6d6;"></div>
<div class="bf" style="top:2212px;height:40px;line-height:40px;right:3765.6px;">218</div>
<div class="bf" style="top:2212px;height:40px;line-height:40px;right:3534.4px;">51,93…</div>
<div class="bf" style="top:2212px;height:40px;line-height:40px;right:3382.8px;">209.10</div>
<div style="left:708px;top:2268px;width:604px;height:44px;background:#ffffff;"></div>
<div style="left:1312px;top:2268px;width:41.2px;height:44px;background:#ececec;"></div>
<div style="left:1353.2px;top:2268px;width:2286.8px;height:44px;background:#d6d6d6;"></div>
<div style="left:3640px;top:2268px;width:1356px;height:44px;background:#ececec;"></div>
<div style="left:708px;top:2310.4px;width:4288px;height:5.2px;background:#b9b9b9;"></div>
<svg style="left:714px;top:2279.2px" width="28" height="20" viewBox="0 0 7 5"><rect x=".4" y=".4" width=".8" height="4.200" fill="#8a8a8a"/><path d="M3.800.4v4.200L1.500 2.500zM6.500.4v4.200L4.200 2.500z" fill="#8a8a8a"/></svg>
<svg style="left:758px;top:2279.2px" width="24" height="20" viewBox="0 0 6 5"><path d="M2.900.4v4.200L.6 2.500zM5.600.4v4.200L3.300 2.500z" fill="#8a8a8a"/></svg>
<svg style="left:807.2px;top:2279.2px" width="16" height="20" viewBox="0 0 4 5"><path d="M3 .4v4.200L.7 2.500z" fill="#8a8a8a"/></svg>
<svg style="left:1072px;top:2279.2px" width="16" height="20" viewBox="0 0 4 5"><path d="M1 .4v4.200l2.300-2.100z" fill="#555"/></svg>
<svg style="left:1110px;top:2279.2px" width="24" height="20" viewBox="0 0 6 5"><path d="M.4.400v4.200l2.300-2.100zM3.100.4v4.200l2.300-2.100z" fill="#555"/></svg>
<svg style="left:1150px;top:2279.2px" width="28" height="20" viewBox="0 0 7 5"><path d="M.5.400v4.200l2.300-2.100zM3.200.4v4.200l2.300-2.100z" fill="#555"/><rect x="5.800" y=".4" width=".8" height="4.200" fill="#555"/></svg>
<div class="t" style="top:2271.2px;height:40px;line-height:40px;left:855.2px;color:#333;transform:scaleX(0.88);transform-origin:0 50%;">Record 1 of 41</div>
<svg style="left:1193.2px;top:2277.2px" width="24" height="24" viewBox="0 0 6 6"><path d="M.8 5.200 1.300 3.700 4.300.700 5.300 1.700 2.300 4.700z" fill="#6a6a6a"/></svg>
<svg style="left:1231.2px;top:2277.2px" width="28" height="24" viewBox="0 0 7 6"><path d="M.6 3.300 2.500 5.200 6.400.800" fill="none" stroke="#b5b5b5" stroke-width=".9"/></svg>
<svg style="left:1276px;top:2279.2px" width="20" height="20" viewBox="0 0 5 5"><path d="M.7.700l3.600 3.600M4.300.700.7 4.300" stroke="#b5b5b5" stroke-width=".8"/></svg>
<svg style="left:1322.4px;top:2279.2px" width="16" height="20" viewBox="0 0 4 5"><path d="M3.200.4v4.200L.6 2.500z" fill="#333"/></svg>
<div style="left:708px;top:2316px;width:4288px;height:69.2px;background:#e2e2e2;"></div>
<div style="left:708px;top:2385.2px;width:4288px;height:130.8px;background:#f0f0f0;"></div>
<div class="bb" style="top:2333.2px;height:40px;line-height:40px;left:740px;">Vehicle Trip Summary</div>
<div style="left:723.2px;top:2449.2px;width:143.2px;height:49.2px;background:#f4f4f4;border:4px solid #bababa;"></div>
<div class="tn" style="top:2395.2px;height:40px;line-height:40px;left:721.6px;transform:scaleX(0.88);transform-origin:0 50%;">Vehicle</div>
<div class="tn" style="top:2454.4px;height:40px;line-height:40px;left:737.6px;transform:scaleX(0.88);transform-origin:0 50%;"><i>KY</i>A506</div>
<div style="left:882px;top:2449.2px;width:193.2px;height:49.2px;background:#f4f4f4;border:4px solid #bababa;"></div>
<div class="tn" style="top:2395.2px;height:40px;line-height:40px;left:880px;transform:scaleX(0.88);transform-origin:0 50%;">Date</div>
<div class="tn" style="top:2454.4px;height:40px;line-height:40px;left:896.4px;transform:scaleX(0.88);transform-origin:0 50%;">25/10/2020</div>
<div style="left:1090px;top:2449.2px;width:56.4px;height:49.2px;background:#f4f4f4;border:4px solid #bababa;"></div>
<div class="tn" style="top:2395.2px;height:40px;line-height:40px;left:1089.2px;transform:scaleX(0.88);transform-origin:0 50%;">Trip</div>
<div class="tn" style="top:2454.4px;height:40px;line-height:40px;left:1104.4px;transform:scaleX(0.88);transform-origin:0 50%;">1</div>
<div style="left:1162.8px;top:2449.2px;width:87.6px;height:49.2px;background:#f4f4f4;border:4px solid #bababa;"></div>
<div class="tn" style="top:2395.2px;height:40px;line-height:40px;left:1163.2px;transform:scaleX(0.88);transform-origin:0 50%;">Entries</div>
<div class="tn" style="top:2454.4px;height:40px;line-height:40px;left:1177.2px;transform:scaleX(0.88);transform-origin:0 50%;">1</div>
<div style="left:1306.8px;top:2449.2px;width:260.4px;height:49.2px;background:#f4f4f4;border:4px solid #bababa;"></div>
<div class="tn" style="top:2395.2px;height:40px;line-height:40px;left:1304.8px;transform:scaleX(0.88);transform-origin:0 50%;">Packs &amp; Kind</div>
<div class="tn" style="top:2454.4px;height:40px;line-height:40px;left:1321.2px;transform:scaleX(0.88);transform-origin:0 50%;">13 Pallet(s)</div>
<div style="left:1582px;top:2449.2px;width:193.2px;height:49.2px;background:#f4f4f4;border:4px solid #bababa;"></div>
<div class="tn" style="top:2403.2px;height:40px;line-height:40px;left:1670px;transform:scaleX(0.88);transform-origin:0 50%;">Weight</div>
<div class="tn" style="top:2454.4px;height:40px;line-height:40px;right:3360.8px;transform:scaleX(0.88);transform-origin:100% 50%;">526.00</div>
<div style="left:1790px;top:2449.2px;width:193.2px;height:49.2px;background:#f4f4f4;border:4px solid #bababa;"></div>
<div class="tn" style="top:2403.2px;height:40px;line-height:40px;left:1872px;transform:scaleX(0.88);transform-origin:0 50%;">Volume</div>
<div class="tn" style="top:2454.4px;height:40px;line-height:40px;right:3152.8px;transform:scaleX(0.88);transform-origin:100% 50%;">3.80</div>
<div style="left:2026.8px;top:2449.2px;width:193.2px;height:49.2px;background:#f4f4f4;border:4px solid #bababa;"></div>
<div class="tn" style="top:2395.2px;height:40px;line-height:40px;left:2045.2px;transform:scaleX(0.88);transform-origin:0 50%;">Max Weight</div>
<div class="tn" style="top:2454.4px;height:40px;line-height:40px;right:2916px;transform:scaleX(0.88);transform-origin:100% 50%;">3,400.00</div>
<div style="left:2236px;top:2449.2px;width:193.2px;height:49.2px;background:#f4f4f4;border:4px solid #bababa;"></div>
<div class="tn" style="top:2395.2px;height:40px;line-height:40px;left:2244.8px;transform:scaleX(0.88);transform-origin:0 50%;">Avail.Weight</div>
<div class="tn" style="top:2454.4px;height:40px;line-height:40px;right:2706.8px;transform:scaleX(0.88);transform-origin:100% 50%;">2,874.00</div>
<div style="left:2484.8px;top:2449.2px;width:193.2px;height:49.2px;background:#f4f4f4;border:4px solid #bababa;"></div>
<div class="tn" style="top:2395.2px;height:40px;line-height:40px;left:2495.2px;transform:scaleX(0.88);transform-origin:0 50%;">Max Volume</div>
<div class="tn" style="top:2454.4px;height:40px;line-height:40px;right:2458px;transform:scaleX(0.88);transform-origin:100% 50%;">20.00</div>
<div style="left:2692.8px;top:2449.2px;width:194.4px;height:49.2px;background:#f4f4f4;border:4px solid #bababa;"></div>
<div class="tn" style="top:2395.2px;height:40px;line-height:40px;left:2694.8px;transform:scaleX(0.88);transform-origin:0 50%;">Avail.Volume</div>
<div class="tn" style="top:2454.4px;height:40px;line-height:40px;right:2248.8px;transform:scaleX(0.88);transform-origin:100% 50%;">16.20</div>
<div style="left:2937.2px;top:2398px;width:328px;height:108.4px;background:#fff;border:4px solid #c9c9c9;"></div>
<svg style="left:2943.2px;top:2430px" width="48" height="44" viewBox="0 0 12 11"><path d="M1 5.500h8.500v3.800H1z" fill="#c9d3e2" stroke="#7f8ea6" stroke-width=".6"/><rect x="2.500" y="7.300" width="5.500" height="3" fill="#f6f8fc" stroke="#8d9ab0" stroke-width=".5"/><path d="M2.500 5.500V3.500h5v2" fill="#eef2f8" stroke="#8d9ab0" stroke-width=".5"/><circle cx="8.600" cy="3.300" r="2.700" fill="#7cc52c" stroke="#55961a" stroke-width=".5"/><path d="M7.500 3.300l.9.900 1.500-1.800" stroke="#fff" stroke-width=".7" fill="none"/></svg>
<div class="tl" style="top:2418.4px;height:40px;line-height:40px;left:2522.4px;width:1200px;text-align:center;transform:scaleX(0.88);transform-origin:50% 50%;">Print Transports</div>
<div class="tl" style="top:2448px;height:40px;line-height:40px;left:2522.4px;width:1200px;text-align:center;transform:scaleX(0.88);transform-origin:50% 50%;">For Trip</div>
<div style="left:708px;top:2516px;width:4288px;height:4px;background:#c2c2c2;"></div>
<div style="left:708px;top:2520px;width:4288px;height:3.2px;background:#fafafa;"></div>
<div style="left:708px;top:2523.2px;width:4288px;height:116.8px;background:#f0f0f0;"></div>
<div style="left:718px;top:2550px;width:308.4px;height:60.4px;background:#fff;border:4px solid #c9c9c9;"></div>
<svg style="left:722px;top:2558px" width="48" height="44" viewBox="0 0 12 11"><path d="M1 5.500h8.500v3.800H1z" fill="#c9d3e2" stroke="#7f8ea6" stroke-width=".6"/><rect x="2.500" y="7.300" width="5.500" height="3" fill="#f6f8fc" stroke="#8d9ab0" stroke-width=".5"/><path d="M2.500 5.500V3.500h5v2" fill="#eef2f8" stroke="#8d9ab0" stroke-width=".5"/><circle cx="8.600" cy="3.300" r="2.700" fill="#7cc52c" stroke="#55961a" stroke-width=".5"/><path d="M7.500 3.300l.9.900 1.500-1.800" stroke="#fff" stroke-width=".7" fill="none"/></svg>
<div class="tl" style="top:2560.8px;height:40px;line-height:40px;left:800.8px;transform:scaleX(0.88);transform-origin:0 50%;">Print Transport</div>
<div class="tn" style="top:2556.4px;height:40px;line-height:40px;left:1558px;transform:scaleX(0.88);transform-origin:0 50%;">View</div>
<div style="left:1650px;top:2552px;width:308.4px;height:48.8px;background:#fff;border:4px solid #bdbdbd;"></div>
<div class="tl" style="top:2556.4px;height:40px;line-height:40px;left:1663.2px;transform:scaleX(0.88);transform-origin:0 50%;">Full</div>
<svg style="left:1927.2px;top:2572px" width="16" height="12" viewBox="0 0 4 3"><path d="M0 0h4L2 2.600z" fill="#333"/></svg>
<div style="left:3633.6px;top:2546px;width:256.4px;height:64.4px;background:#fff;border:4px solid #c9c9c9;"></div>
<svg style="left:3650px;top:2558.4px" width="24" height="40" viewBox="0 0 6 10"><rect x=".5" y=".5" width="5" height="9" rx=".9" fill="#23262e"/><rect x="1.200" y="1.600" width="3.600" height="5.800" fill="#4a7fc8"/><path d="M1.200 1.600h3.600L1.200 5z" fill="#7fb0ea"/></svg>
<div class="tl" style="top:2558.8px;height:40px;line-height:40px;left:3182.4px;width:1200px;text-align:center;transform:scaleX(0.88);transform-origin:50% 50%;"><i>SM</i>S Driver</div>
<div style="left:3909.2px;top:2546px;width:258.8px;height:64.4px;background:#fff;border:4px solid #c9c9c9;"></div>
<svg style="left:3925.6px;top:2558.4px" width="24" height="40" viewBox="0 0 6 10"><rect x=".5" y=".5" width="5" height="9" rx=".9" fill="#23262e"/><rect x="1.200" y="1.600" width="3.600" height="5.800" fill="#4a7fc8"/><path d="M1.200 1.600h3.600L1.200 5z" fill="#7fb0ea"/></svg>
<div class="tl" style="top:2558.8px;height:40px;line-height:40px;left:3461.2px;width:1200px;text-align:center;transform:scaleX(0.88);transform-origin:50% 50%;"><i>SM</i>S Client</div>
<div style="left:4196px;top:2546px;width:285.2px;height:64.4px;background:#fff;border:4px solid #c9c9c9;"></div>
<svg style="left:4208.8px;top:2560.4px" width="36" height="36" viewBox="0 0 9 9"><rect x=".6" y=".6" width="6" height="5.500" fill="#eef3fb" stroke="#6d8fc4" stroke-width=".6"/><path d="M.6 2.300h6M2.600.6v5.500M4.600.6v5.500" stroke="#9db5dc" stroke-width=".4"/><rect x="3.800" y="3.800" width="4.600" height="4.600" fill="#f4f4f4" stroke="#9a9a9a" stroke-width=".5"/><path d="M5 5h2.200L5 7.200h2.200" stroke="#d03a22" stroke-width=".8" fill="none"/></svg>
<div class="tl" style="top:2558.8px;height:40px;line-height:40px;left:3761.6px;width:1200px;text-align:center;transform:scaleX(0.88);transform-origin:50% 50%;">Summary</div>
<div style="left:4500px;top:2546px;width:284.8px;height:64.4px;background:#fff;border:4px solid #9aa3d8;box-shadow:inset 0 0 0 4px #c9cdf0;"></div>
<svg style="left:4511.2px;top:2557.6px" width="40" height="40" viewBox="0 0 10 10"><rect x=".5" y=".5" width="6" height="7" fill="#f1f5fb" stroke="#8aa0c4" stroke-width=".5"/><circle cx="5.800" cy="5.800" r="3.600" fill="#7cc52c" stroke="#55961a" stroke-width=".5"/><path d="M4 5.300a2 2 0 0 1 3.500-.8M7.600 6.300a2 2 0 0 1-3.500.8" stroke="#fff" stroke-width=".8" fill="none"/></svg>
<div class="tl" style="top:2558.8px;height:40px;line-height:40px;left:4065.6px;width:1200px;text-align:center;transform:scaleX(0.88);transform-origin:50% 50%;">Refresh Data</div>
<div style="left:708px;top:2636px;width:4288px;height:8.8px;background:linear-gradient(#e4e4e4,#bcbcbc 50%,#dcdcdc);"></div>
<div style="left:708px;top:2644.8px;width:4288px;height:8.4px;background:#f8f8f8;"></div>
<div style="left:708px;top:2653.2px;width:8.4px;height:61.6px;background:#f4f4f4;"></div>
<div style="left:716.4px;top:2653.2px;width:4279.6px;height:61.6px;background:#f0f0f0;border:4px solid #bdbdbd;border-right:none;"></div>
<div style="left:718px;top:2679.6px;width:4278px;height:7.2px;background:#b4b4b4;"></div>
<div style="left:4368.8px;top:2655.2px;width:3.6px;height:58.4px;background:#8f8f8f;"></div>
<div style="left:708px;top:2714.8px;width:4288px;height:7.2px;background:#fbfaf6;"></div>
<div style="left:1988.8px;top:964.8px;width:21.2px;height:1229.6px;background:linear-gradient(90deg,#d2d2d2,#ababab 13.2px,#b4b4b4);opacity:.9;"></div>
<div style="left:4354.8px;top:970.8px;width:11.2px;height:1223.6px;background:linear-gradient(90deg,rgba(110,115,130,.42),rgba(130,135,150,.22));"></div>
<div style="left:2002px;top:2185.2px;width:2352.8px;height:9.2px;background:linear-gradient(rgba(120,120,125,.6),rgba(140,140,145,.3));"></div>
<div style="left:1990.8px;top:984.6px;width:4.8px;height:4.8px;background:#5c5266;"></div>
<div style="left:1990.8px;top:1043.7px;width:4.8px;height:4.8px;background:#5c5266;"></div>
<div style="left:1990.8px;top:1102.8px;width:4.8px;height:4.8px;background:#5c5266;"></div>
<div style="left:1990.8px;top:1161.9px;width:4.8px;height:4.8px;background:#5c5266;"></div>
<div style="left:1990.8px;top:1221px;width:4.8px;height:4.8px;background:#5c5266;"></div>
<div style="left:1990.8px;top:1280.1px;width:4.8px;height:4.8px;background:#5c5266;"></div>
<div style="left:1990.8px;top:1339.2px;width:4.8px;height:4.8px;background:#5c5266;"></div>
<div style="left:1990.8px;top:1398.3px;width:4.8px;height:4.8px;background:#5c5266;"></div>
<div style="left:1990.8px;top:1457.4px;width:4.8px;height:4.8px;background:#5c5266;"></div>
<div style="left:1990.8px;top:1516.5px;width:4.8px;height:4.8px;background:#5c5266;"></div>
<div style="left:1990.8px;top:1575.6px;width:4.8px;height:4.8px;background:#5c5266;"></div>
<div style="left:1990.8px;top:1634.7px;width:4.8px;height:4.8px;background:#5c5266;"></div>
<div style="left:1990.8px;top:1693.8px;width:4.8px;height:4.8px;background:#5c5266;"></div>
<div style="left:1990.8px;top:1752.9px;width:4.8px;height:4.8px;background:#5c5266;"></div>
<div style="left:1990.8px;top:1812px;width:4.8px;height:4.8px;background:#5c5266;"></div>
<div style="left:1990.8px;top:1871.1px;width:4.8px;height:4.8px;background:#5c5266;"></div>
<div style="left:1990.8px;top:1930.2px;width:4.8px;height:4.8px;background:#5c5266;"></div>
<div style="left:1990.8px;top:1989.3px;width:4.8px;height:4.8px;background:#5c5266;"></div>
<div style="left:1990.8px;top:2048.4px;width:4.8px;height:4.8px;background:#5c5266;"></div>
<div style="left:1990.8px;top:2107.5px;width:4.8px;height:4.8px;background:#5c5266;"></div>
<div style="left:1990.8px;top:2166.6px;width:4.8px;height:4.8px;background:#5c5266;"></div>
<div style="left:2002px;top:964.8px;width:2352.8px;height:1220.4px;background:#fff;"></div>
<div style="left:2002px;top:964.8px;width:2352.8px;height:66.4px;background:#0f6cbd;"></div>
<div class="b w" style="top:979.2px;height:40px;line-height:40px;left:2028px;">Transportations Summary</div>
<div style="left:2002px;top:1031.2px;width:2352.8px;height:135.6px;background:#f0f0f0;"></div>
<div style="left:2002px;top:1031.2px;width:2352.8px;height:6.8px;background:#e6e6e6;"></div>
<div class="t" style="top:1047.8px;height:40px;line-height:40px;left:1821px;width:1200px;text-align:center;transform:scaleX(0.88);transform-origin:50% 50%;">Vehicle &amp; Trip</div>
<div style="left:2068px;top:1038px;width:4px;height:64.4px;background:#d3d3d3;"></div>
<div class="t" style="top:1047.8px;height:40px;line-height:40px;left:2550px;width:1200px;text-align:center;transform:scaleX(0.88);transform-origin:50% 50%;">Transport Details</div>
<div style="left:2770px;top:1038px;width:4px;height:64.4px;background:#d3d3d3;"></div>
<div class="t" style="top:1047.8px;height:40px;line-height:40px;left:3339px;width:1200px;text-align:center;transform:scaleX(0.88);transform-origin:50% 50%;">Validation</div>
<div style="left:3526px;top:1038px;width:4px;height:64.4px;background:#d3d3d3;"></div>
<div style="left:2002px;top:1100.4px;width:2348.8px;height:4px;background:#d3d3d3;"></div>
<div style="left:2002px;top:1164.8px;width:2348.8px;height:4px;background:#d3d3d3;"></div>
<div style="left:4348px;top:1038px;width:4px;height:128.8px;background:#d3d3d3;"></div>
<div style="left:2068px;top:1102.4px;width:4px;height:64.4px;background:#d3d3d3;"></div>
<div class="t" style="top:1114.2px;height:40px;line-height:40px;left:2083.2px;transform:scaleX(0.88);transform-origin:0 50%;">Reg.No</div>
<div style="left:2203.2px;top:1102.4px;width:4px;height:64.4px;background:#d3d3d3;"></div>
<div class="t" style="top:1114.2px;height:40px;line-height:40px;left:2218.4px;transform:scaleX(0.88);transform-origin:0 50%;">Date</div>
<div style="left:2368px;top:1102.4px;width:4px;height:64.4px;background:#d3d3d3;"></div>
<div class="t" style="top:1114.2px;height:40px;line-height:40px;left:2383.2px;transform:scaleX(0.88);transform-origin:0 50%;">Trip</div>
<div style="left:2466px;top:1102.4px;width:4px;height:64.4px;background:#d3d3d3;"></div>
<div class="t" style="top:1114.2px;height:40px;line-height:40px;left:2481.2px;transform:scaleX(0.88);transform-origin:0 50%;">Driver</div>
<div style="left:2651.2px;top:1102.4px;width:4px;height:64.4px;background:#d3d3d3;"></div>
<div class="t" style="top:1114.2px;height:40px;line-height:40px;left:2666.4px;transform:scaleX(0.88);transform-origin:0 50%;">Entries</div>
<div style="left:2770px;top:1102.4px;width:4px;height:64.4px;background:#d3d3d3;"></div>
<div class="t" style="top:1114.2px;height:40px;line-height:40px;left:2785.2px;transform:scaleX(0.88);transform-origin:0 50%;">Packs</div>
<div style="left:2913.2px;top:1102.4px;width:4px;height:64.4px;background:#d3d3d3;"></div>
<div class="t" style="top:1114.2px;height:40px;line-height:40px;left:2928.4px;transform:scaleX(0.88);transform-origin:0 50%;">Kind</div>
<div style="left:3108px;top:1102.4px;width:4px;height:64.4px;background:#d3d3d3;"></div>
<div class="t" style="top:1114.2px;height:40px;line-height:40px;left:3123.2px;transform:scaleX(0.88);transform-origin:0 50%;">Load.Weight</div>
<div style="left:3303.2px;top:1102.4px;width:4px;height:64.4px;background:#d3d3d3;"></div>
<div class="t" style="top:1114.2px;height:40px;line-height:40px;left:3318.4px;transform:scaleX(0.88);transform-origin:0 50%;">Load.Vol</div>
<div style="left:3526px;top:1102.4px;width:4px;height:64.4px;background:#d3d3d3;"></div>
<div class="t" style="top:1114.2px;height:40px;line-height:40px;left:3541.2px;transform:scaleX(0.88);transform-origin:0 50%;">Max.Weight</div>
<div style="left:3729.2px;top:1102.4px;width:4px;height:64.4px;background:#d3d3d3;"></div>
<div class="t" style="top:1114.2px;height:40px;line-height:40px;left:3744.4px;transform:scaleX(0.88);transform-origin:0 50%;">Max.Volume</div>
<div style="left:3932.8px;top:1102.4px;width:4px;height:64.4px;background:#d3d3d3;"></div>
<div class="t" style="top:1114.2px;height:40px;line-height:40px;left:3948px;transform:scaleX(0.88);transform-origin:0 50%;">Avail.Weight</div>
<div style="left:4135.2px;top:1102.4px;width:4px;height:64.4px;background:#d3d3d3;"></div>
<div class="t" style="top:1114.2px;height:40px;line-height:40px;left:4150.4px;transform:scaleX(0.88);transform-origin:0 50%;">Avail.Vol</div>
<div style="left:2070px;top:1218.8px;width:2280px;height:4px;background:#dedede;"></div>
<svg style="left:2021.2px;top:1184.2px" width="28" height="20" viewBox="0 0 7 5"><path d="M.5 2.500h5M3.800.7l1.900 1.800-1.900 1.800" fill="none" stroke="#3b86d4" stroke-width=".8"/></svg>
<div class="t" style="top:1172.6px;height:40px;line-height:40px;left:2083.6px;transform:scaleX(0.88);transform-origin:0 50%;"><i>KK</i>K</div>
<div class="t" style="top:1172.6px;height:40px;line-height:40px;left:2218.8px;transform:scaleX(0.88);transform-origin:0 50%;">20/10/2…</div>
<div class="t" style="top:1172.6px;height:40px;line-height:40px;right:2667.2px;transform:scaleX(0.88);transform-origin:100% 50%;">1</div>
<div class="t" style="top:1172.6px;height:40px;line-height:40px;left:2481.6px;transform:scaleX(0.88);transform-origin:0 50%;">Savvas Sa…</div>
<div class="t" style="top:1172.6px;height:40px;line-height:40px;right:2363.2px;transform:scaleX(0.88);transform-origin:100% 50%;">3</div>
<div class="t" style="top:1172.6px;height:40px;line-height:40px;right:2220px;transform:scaleX(0.88);transform-origin:100% 50%;">30</div>
<div class="t" style="top:1172.6px;height:40px;line-height:40px;right:1830px;transform:scaleX(0.88);transform-origin:100% 50%;">3,042.00</div>
<div class="t" style="top:1172.6px;height:40px;line-height:40px;right:1607.2px;transform:scaleX(0.88);transform-origin:100% 50%;">17.800</div>
<div class="tt" style="top:1172.6px;height:40px;line-height:40px;right:1404px;transform:scaleX(0.88);transform-origin:100% 50%;">5,000.00</div>
<div class="tt" style="top:1172.6px;height:40px;line-height:40px;right:1200.4px;transform:scaleX(0.88);transform-origin:100% 50%;">25.000</div>
<div class="bn" style="top:1175px;height:40px;line-height:40px;right:998px;">1,958.00</div>
<div class="bn" style="top:1175px;height:40px;line-height:40px;right:785.2px;">7.200</div>
<div style="left:2070px;top:1272.8px;width:2280px;height:4px;background:#dedede;"></div>
<div class="t" style="top:1226.6px;height:40px;line-height:40px;left:2083.6px;transform:scaleX(0.88);transform-origin:0 50%;"><i>KY</i>A506</div>
<div class="t" style="top:1226.6px;height:40px;line-height:40px;left:2218.8px;transform:scaleX(0.88);transform-origin:0 50%;">25/10/2…</div>
<div class="t" style="top:1226.6px;height:40px;line-height:40px;right:2667.2px;transform:scaleX(0.88);transform-origin:100% 50%;">1</div>
<div class="t" style="top:1226.6px;height:40px;line-height:40px;left:2481.6px;transform:scaleX(0.88);transform-origin:0 50%;">Savvas Sa…</div>
<div class="t" style="top:1226.6px;height:40px;line-height:40px;right:2363.2px;transform:scaleX(0.88);transform-origin:100% 50%;">1</div>
<div class="t" style="top:1226.6px;height:40px;line-height:40px;right:2220px;transform:scaleX(0.88);transform-origin:100% 50%;">13</div>
<div class="t" style="top:1226.6px;height:40px;line-height:40px;right:1830px;transform:scaleX(0.88);transform-origin:100% 50%;">526.00</div>
<div class="t" style="top:1226.6px;height:40px;line-height:40px;right:1607.2px;transform:scaleX(0.88);transform-origin:100% 50%;">3.800</div>
<div class="tt" style="top:1226.6px;height:40px;line-height:40px;right:1404px;transform:scaleX(0.88);transform-origin:100% 50%;">3,400.00</div>
<div class="tt" style="top:1226.6px;height:40px;line-height:40px;right:1200.4px;transform:scaleX(0.88);transform-origin:100% 50%;">20.000</div>
<div class="bn" style="top:1229px;height:40px;line-height:40px;right:998px;">2,874.00</div>
<div class="bn" style="top:1229px;height:40px;line-height:40px;right:785.2px;">16.200</div>
<div style="left:2070px;top:1326.8px;width:2280px;height:4px;background:#dedede;"></div>
<div class="t" style="top:1280.6px;height:40px;line-height:40px;left:2083.6px;transform:scaleX(0.88);transform-origin:0 50%;"><i>KY</i>A506</div>
<div class="t" style="top:1280.6px;height:40px;line-height:40px;left:2218.8px;transform:scaleX(0.88);transform-origin:0 50%;">30/09/2…</div>
<div class="t" style="top:1280.6px;height:40px;line-height:40px;right:2667.2px;transform:scaleX(0.88);transform-origin:100% 50%;">1</div>
<div class="t" style="top:1280.6px;height:40px;line-height:40px;right:2363.2px;transform:scaleX(0.88);transform-origin:100% 50%;">1</div>
<div class="t" style="top:1280.6px;height:40px;line-height:40px;right:2220px;transform:scaleX(0.88);transform-origin:100% 50%;">15</div>
<div class="t" style="top:1280.6px;height:40px;line-height:40px;right:1830px;transform:scaleX(0.88);transform-origin:100% 50%;">3,050.00</div>
<div class="t" style="top:1280.6px;height:40px;line-height:40px;right:1607.2px;transform:scaleX(0.88);transform-origin:100% 50%;">8.000</div>
<div class="tt" style="top:1280.6px;height:40px;line-height:40px;right:1404px;transform:scaleX(0.88);transform-origin:100% 50%;">3,400.00</div>
<div class="tt" style="top:1280.6px;height:40px;line-height:40px;right:1200.4px;transform:scaleX(0.88);transform-origin:100% 50%;">20.000</div>
<div class="bn" style="top:1283px;height:40px;line-height:40px;right:998px;">350.00</div>
<div class="bn" style="top:1283px;height:40px;line-height:40px;right:785.2px;">12.000</div>
<div style="left:2070px;top:1380.8px;width:2280px;height:4px;background:#dedede;"></div>
<div class="t" style="top:1334.6px;height:40px;line-height:40px;left:2083.6px;transform:scaleX(0.88);transform-origin:0 50%;"><i>KY</i>A506</div>
<div class="t" style="top:1334.6px;height:40px;line-height:40px;left:2218.8px;transform:scaleX(0.88);transform-origin:0 50%;">06/04/2…</div>
<div class="t" style="top:1334.6px;height:40px;line-height:40px;right:2667.2px;transform:scaleX(0.88);transform-origin:100% 50%;">1</div>
<div class="t" style="top:1334.6px;height:40px;line-height:40px;left:2481.6px;transform:scaleX(0.88);transform-origin:0 50%;">Costas Co…</div>
<div class="t" style="top:1334.6px;height:40px;line-height:40px;right:2363.2px;transform:scaleX(0.88);transform-origin:100% 50%;">1</div>
<div class="t" style="top:1334.6px;height:40px;line-height:40px;right:2220px;transform:scaleX(0.88);transform-origin:100% 50%;">4</div>
<div class="t" style="top:1334.6px;height:40px;line-height:40px;right:1830px;transform:scaleX(0.88);transform-origin:100% 50%;">2,570.00</div>
<div class="t" style="top:1334.6px;height:40px;line-height:40px;right:1607.2px;transform:scaleX(0.88);transform-origin:100% 50%;">8.000</div>
<div class="tt" style="top:1334.6px;height:40px;line-height:40px;right:1404px;transform:scaleX(0.88);transform-origin:100% 50%;">3,400.00</div>
<div class="tt" style="top:1334.6px;height:40px;line-height:40px;right:1200.4px;transform:scaleX(0.88);transform-origin:100% 50%;">20.000</div>
<div class="bn" style="top:1337px;height:40px;line-height:40px;right:998px;">830.00</div>
<div class="bn" style="top:1337px;height:40px;line-height:40px;right:785.2px;">12.000</div>
<div style="left:2070px;top:1434.8px;width:2280px;height:4px;background:#dedede;"></div>
<div class="t" style="top:1388.6px;height:40px;line-height:40px;left:2083.6px;transform:scaleX(0.88);transform-origin:0 50%;"><i>KY</i>A506</div>
<div class="t" style="top:1388.6px;height:40px;line-height:40px;left:2218.8px;transform:scaleX(0.88);transform-origin:0 50%;">04/06/2…</div>
<div class="t" style="top:1388.6px;height:40px;line-height:40px;right:2667.2px;transform:scaleX(0.88);transform-origin:100% 50%;">1</div>
<div class="t" style="top:1388.6px;height:40px;line-height:40px;left:2481.6px;transform:scaleX(0.88);transform-origin:0 50%;">Savvas Sa…</div>
<div class="t" style="top:1388.6px;height:40px;line-height:40px;right:2363.2px;transform:scaleX(0.88);transform-origin:100% 50%;">2</div>
<div class="t" style="top:1388.6px;height:40px;line-height:40px;right:2220px;transform:scaleX(0.88);transform-origin:100% 50%;">17</div>
<div class="t" style="top:1388.6px;height:40px;line-height:40px;right:1830px;transform:scaleX(0.88);transform-origin:100% 50%;">1,714.00</div>
<div class="t" style="top:1388.6px;height:40px;line-height:40px;right:1607.2px;transform:scaleX(0.88);transform-origin:100% 50%;">15.000</div>
<div class="tt" style="top:1388.6px;height:40px;line-height:40px;right:1404px;transform:scaleX(0.88);transform-origin:100% 50%;">3,400.00</div>
<div class="tt" style="top:1388.6px;height:40px;line-height:40px;right:1200.4px;transform:scaleX(0.88);transform-origin:100% 50%;">20.000</div>
<div class="bn" style="top:1391px;height:40px;line-height:40px;right:998px;">1,686.00</div>
<div class="bn" style="top:1391px;height:40px;line-height:40px;right:785.2px;">5.000</div>
<div style="left:2070px;top:1436.8px;width:2280px;height:54px;background:#f8deb1;"></div>
<div style="left:2070px;top:1488.8px;width:2280px;height:4px;background:#dedede;"></div>
<div class="t" style="top:1442.6px;height:40px;line-height:40px;left:2083.6px;transform:scaleX(0.88);transform-origin:0 50%;"><i>KY</i>A506</div>
<div class="t" style="top:1442.6px;height:40px;line-height:40px;left:2218.8px;transform:scaleX(0.88);transform-origin:0 50%;">05/06/2…</div>
<div class="t" style="top:1442.6px;height:40px;line-height:40px;right:2667.2px;transform:scaleX(0.88);transform-origin:100% 50%;">2</div>
<div class="t" style="top:1442.6px;height:40px;line-height:40px;left:2481.6px;transform:scaleX(0.88);transform-origin:0 50%;">Savvas Sa…</div>
<div class="t" style="top:1442.6px;height:40px;line-height:40px;right:2363.2px;transform:scaleX(0.88);transform-origin:100% 50%;">1</div>
<div class="t" style="top:1442.6px;height:40px;line-height:40px;right:2220px;transform:scaleX(0.88);transform-origin:100% 50%;">20</div>
<div class="t" style="top:1442.6px;height:40px;line-height:40px;right:1830px;transform:scaleX(0.88);transform-origin:100% 50%;">2,589.00</div>
<div class="t" style="top:1442.6px;height:40px;line-height:40px;right:1607.2px;transform:scaleX(0.88);transform-origin:100% 50%;">25.000</div>
<div class="tt" style="top:1442.6px;height:40px;line-height:40px;right:1404px;transform:scaleX(0.88);transform-origin:100% 50%;">3,400.00</div>
<div class="tt" style="top:1442.6px;height:40px;line-height:40px;right:1200.4px;transform:scaleX(0.88);transform-origin:100% 50%;">20.000</div>
<div class="bn" style="top:1445px;height:40px;line-height:40px;right:998px;">811.00</div>
<div class="bn" style="top:1445px;height:40px;line-height:40px;right:785.2px;">-5.000</div>
<div style="left:2070px;top:1542.8px;width:2280px;height:4px;background:#dedede;"></div>
<div class="t" style="top:1496.6px;height:40px;line-height:40px;left:2083.6px;transform:scaleX(0.88);transform-origin:0 50%;"><i>KK</i>K</div>
<div class="t" style="top:1496.6px;height:40px;line-height:40px;left:2218.8px;transform:scaleX(0.88);transform-origin:0 50%;">06/10/2…</div>
<div class="t" style="top:1496.6px;height:40px;line-height:40px;right:2667.2px;transform:scaleX(0.88);transform-origin:100% 50%;">1</div>
<div class="t" style="top:1496.6px;height:40px;line-height:40px;left:2481.6px;transform:scaleX(0.88);transform-origin:0 50%;">Savvas Sa…</div>
<div class="t" style="top:1496.6px;height:40px;line-height:40px;right:2363.2px;transform:scaleX(0.88);transform-origin:100% 50%;">1</div>
<div class="t" style="top:1496.6px;height:40px;line-height:40px;right:2220px;transform:scaleX(0.88);transform-origin:100% 50%;">1</div>
<div class="t" style="top:1496.6px;height:40px;line-height:40px;right:1830px;transform:scaleX(0.88);transform-origin:100% 50%;">101.00</div>
<div class="t" style="top:1496.6px;height:40px;line-height:40px;right:1607.2px;transform:scaleX(0.88);transform-origin:100% 50%;">2.000</div>
<div class="tt" style="top:1496.6px;height:40px;line-height:40px;right:1404px;transform:scaleX(0.88);transform-origin:100% 50%;">5,000.00</div>
<div class="tt" style="top:1496.6px;height:40px;line-height:40px;right:1200.4px;transform:scaleX(0.88);transform-origin:100% 50%;">25.000</div>
<div class="bn" style="top:1499px;height:40px;line-height:40px;right:998px;">4,899.00</div>
<div class="bn" style="top:1499px;height:40px;line-height:40px;right:785.2px;">23.000</div>
<div style="left:2070px;top:1596.8px;width:2280px;height:4px;background:#dedede;"></div>
<div class="t" style="top:1550.6px;height:40px;line-height:40px;left:2083.6px;transform:scaleX(0.88);transform-origin:0 50%;"><i>KK</i>K</div>
<div class="t" style="top:1550.6px;height:40px;line-height:40px;left:2218.8px;transform:scaleX(0.88);transform-origin:0 50%;">07/10/2…</div>
<div class="t" style="top:1550.6px;height:40px;line-height:40px;right:2667.2px;transform:scaleX(0.88);transform-origin:100% 50%;">2</div>
<div class="t" style="top:1550.6px;height:40px;line-height:40px;left:2481.6px;transform:scaleX(0.88);transform-origin:0 50%;">Savvas Sa…</div>
<div class="t" style="top:1550.6px;height:40px;line-height:40px;right:2363.2px;transform:scaleX(0.88);transform-origin:100% 50%;">1</div>
<div class="t" style="top:1550.6px;height:40px;line-height:40px;right:2220px;transform:scaleX(0.88);transform-origin:100% 50%;">5</div>
<div class="t" style="top:1550.6px;height:40px;line-height:40px;right:1830px;transform:scaleX(0.88);transform-origin:100% 50%;">1,320.00</div>
<div class="t" style="top:1550.6px;height:40px;line-height:40px;right:1607.2px;transform:scaleX(0.88);transform-origin:100% 50%;">0.000</div>
<div class="tt" style="top:1550.6px;height:40px;line-height:40px;right:1404px;transform:scaleX(0.88);transform-origin:100% 50%;">5,000.00</div>
<div class="tt" style="top:1550.6px;height:40px;line-height:40px;right:1200.4px;transform:scaleX(0.88);transform-origin:100% 50%;">25.000</div>
<div class="bn" style="top:1553px;height:40px;line-height:40px;right:998px;">3,680.00</div>
<div class="bn" style="top:1553px;height:40px;line-height:40px;right:785.2px;">25.000</div>
<div style="left:2070px;top:1650.8px;width:2280px;height:4px;background:#dedede;"></div>
<div class="t" style="top:1604.6px;height:40px;line-height:40px;left:2083.6px;transform:scaleX(0.88);transform-origin:0 50%;"><i>KK</i>K</div>
<div class="t" style="top:1604.6px;height:40px;line-height:40px;left:2218.8px;transform:scaleX(0.88);transform-origin:0 50%;">20/10/2…</div>
<div class="t" style="top:1604.6px;height:40px;line-height:40px;right:2667.2px;transform:scaleX(0.88);transform-origin:100% 50%;">1</div>
<div class="t" style="top:1604.6px;height:40px;line-height:40px;left:2481.6px;transform:scaleX(0.88);transform-origin:0 50%;">Savvas Sa…</div>
<div class="t" style="top:1604.6px;height:40px;line-height:40px;right:2363.2px;transform:scaleX(0.88);transform-origin:100% 50%;">2</div>
<div class="t" style="top:1604.6px;height:40px;line-height:40px;right:2220px;transform:scaleX(0.88);transform-origin:100% 50%;">2</div>
<div class="t" style="top:1604.6px;height:40px;line-height:40px;right:1830px;transform:scaleX(0.88);transform-origin:100% 50%;">218.00</div>
<div class="t" style="top:1604.6px;height:40px;line-height:40px;right:1607.2px;transform:scaleX(0.88);transform-origin:100% 50%;">3.000</div>
<div class="tt" style="top:1604.6px;height:40px;line-height:40px;right:1404px;transform:scaleX(0.88);transform-origin:100% 50%;">5,000.00</div>
<div class="tt" style="top:1604.6px;height:40px;line-height:40px;right:1200.4px;transform:scaleX(0.88);transform-origin:100% 50%;">25.000</div>
<div class="bn" style="top:1607px;height:40px;line-height:40px;right:998px;">4,782.00</div>
<div class="bn" style="top:1607px;height:40px;line-height:40px;right:785.2px;">22.000</div>
<div style="left:2068px;top:1166.8px;width:4px;height:486px;background:#dedede;"></div>
<div style="left:2203.2px;top:1166.8px;width:4px;height:486px;background:#dedede;"></div>
<div style="left:2368px;top:1166.8px;width:4px;height:486px;background:#dedede;"></div>
<div style="left:2466px;top:1166.8px;width:4px;height:486px;background:#dedede;"></div>
<div style="left:2651.2px;top:1166.8px;width:4px;height:486px;background:#dedede;"></div>
<div style="left:2770px;top:1166.8px;width:4px;height:486px;background:#dedede;"></div>
<div style="left:2913.2px;top:1166.8px;width:4px;height:486px;background:#dedede;"></div>
<div style="left:3108px;top:1166.8px;width:4px;height:486px;background:#dedede;"></div>
<div style="left:3303.2px;top:1166.8px;width:4px;height:486px;background:#dedede;"></div>
<div style="left:3526px;top:1166.8px;width:4px;height:486px;background:#dedede;"></div>
<div style="left:3729.2px;top:1166.8px;width:4px;height:486px;background:#dedede;"></div>
<div style="left:3932.8px;top:1166.8px;width:4px;height:486px;background:#dedede;"></div>
<div style="left:4135.2px;top:1166.8px;width:4px;height:486px;background:#dedede;"></div>
<div style="left:4348px;top:1166.8px;width:4px;height:486px;background:#dedede;"></div>
<div style="left:2002px;top:2020px;width:658px;height:45.2px;background:#f0f0f0;"></div>
<div style="left:2660px;top:2020px;width:1694.8px;height:45.2px;background:#ebebeb;"></div>
<svg style="left:2011.2px;top:2032.4px" width="28" height="20" viewBox="0 0 7 5"><rect x=".4" y=".4" width=".8" height="4.200" fill="#a9a9a9"/><path d="M3.800.4v4.200L1.500 2.500zM6.500.4v4.200L4.200 2.500z" fill="#a9a9a9"/></svg>
<svg style="left:2058px;top:2032.4px" width="24" height="20" viewBox="0 0 6 5"><path d="M2.900.4v4.200L.6 2.500zM5.600.4v4.200L3.300 2.500z" fill="#a9a9a9"/></svg>
<svg style="left:2105.2px;top:2032.4px" width="16" height="20" viewBox="0 0 4 5"><path d="M3 .4v4.200L.7 2.500z" fill="#a9a9a9"/></svg>
<svg style="left:2342px;top:2032.4px" width="16" height="20" viewBox="0 0 4 5"><path d="M1 .4v4.200l2.300-2.100z" fill="#555"/></svg>
<svg style="left:2378px;top:2032.4px" width="24" height="20" viewBox="0 0 6 5"><path d="M.4.400v4.200l2.300-2.100zM3.100.4v4.200l2.300-2.100z" fill="#555"/></svg>
<svg style="left:2418px;top:2032.4px" width="28" height="20" viewBox="0 0 7 5"><path d="M.5.400v4.200l2.300-2.100zM3.200.4v4.200l2.300-2.100z" fill="#555"/><rect x="5.800" y=".4" width=".8" height="4.200" fill="#555"/></svg>
<div class="t" style="top:2024px;height:40px;line-height:40px;left:2147.2px;color:#333;transform:scaleX(0.88);transform-origin:0 50%;">Record 1 of 9</div>
<svg style="left:2462px;top:2032.4px" width="20" height="20" viewBox="0 0 5 5"><path d="M2.500.5v4M.5 2.500h4" stroke="#7c7c7c" stroke-width="1"/></svg>
<svg style="left:2503.2px;top:2032.4px" width="20" height="20" viewBox="0 0 5 5"><path d="M.5 2.500h4" stroke="#7c7c7c" stroke-width="1"/></svg>
<svg style="left:2543.2px;top:2030.4px" width="24" height="24" viewBox="0 0 6 6"><path d="M.8 5.200 1.300 3.700 4.300.700 5.300 1.700 2.300 4.700z" fill="#858585"/></svg>
<svg style="left:2581.2px;top:2030.4px" width="28" height="24" viewBox="0 0 7 6"><path d="M.6 3.300 2.500 5.200 6.400.800" fill="none" stroke="#b0b0b0" stroke-width=".9"/></svg>
<svg style="left:2627.2px;top:2032.4px" width="20" height="20" viewBox="0 0 5 5"><path d="M.7.700l3.600 3.600M4.300.700.7 4.300" stroke="#b0b0b0" stroke-width=".8"/></svg>
<svg style="left:2674px;top:2034.4px" width="12" height="16" viewBox="0 0 3 4"><path d="M2.600.3v3.400L.4 2z" fill="#bdbdbd"/></svg>
<svg style="left:4320px;top:2034.4px" width="12" height="16" viewBox="0 0 3 4"><path d="M.4.300v3.400L2.600 2z" fill="#bdbdbd"/></svg>
<div style="left:2002px;top:2065.2px;width:2352.8px;height:3.6px;background:#bdbdbd;"></div>
<div style="left:2002px;top:2068.8px;width:2352.8px;height:116.4px;background:#f0f0f0;"></div>
<div style="left:3093.2px;top:2090px;width:164.8px;height:70.8px;background:#fff;border:4px solid #9aa3d8;box-shadow:inset 0 0 0 4px #c9cdf0;"></div>
<div class="tl" style="top:2105.6px;height:40px;line-height:40px;left:2574.4px;width:1200px;text-align:center;transform:scaleX(0.88);transform-origin:50% 50%;"><i>O</i>K</div>
</div>
</body></html>
